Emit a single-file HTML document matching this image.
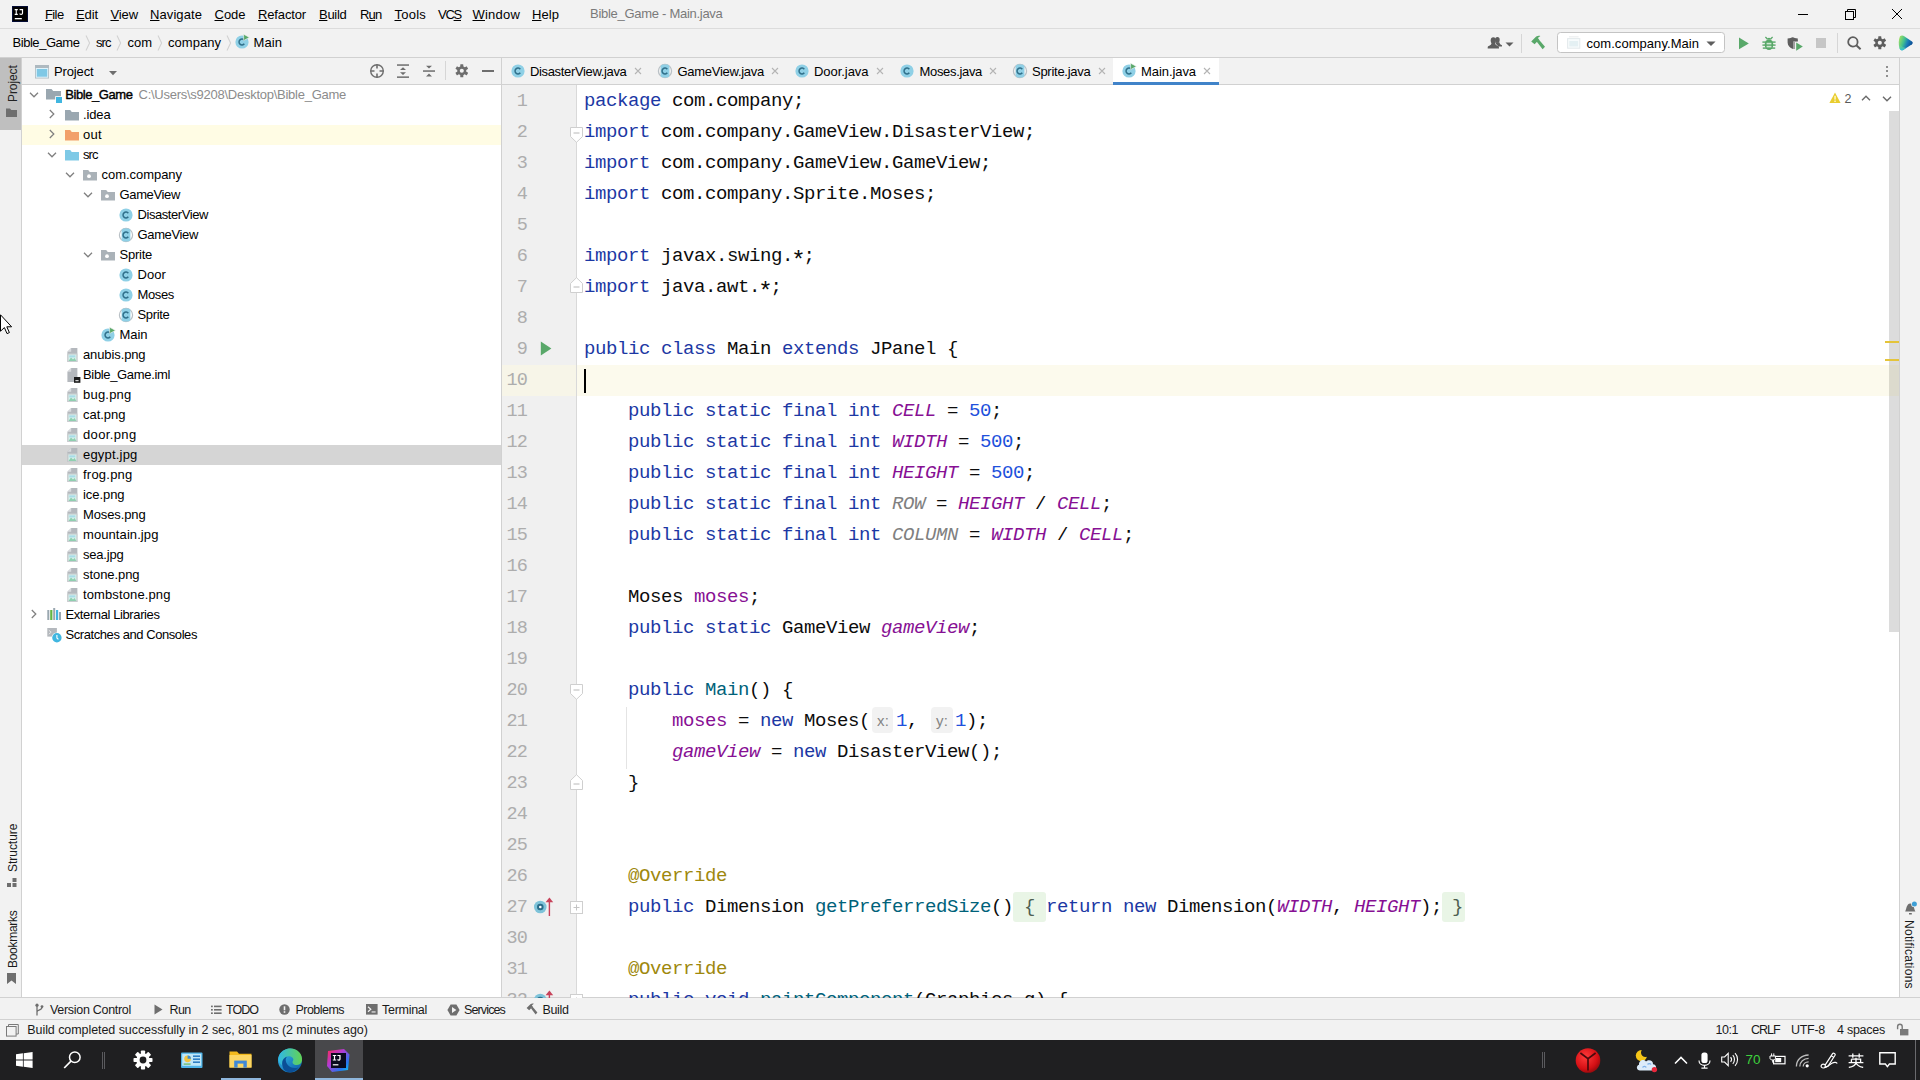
<!DOCTYPE html>
<html><head><meta charset="utf-8"><title>Bible_Game - Main.java</title>
<style>
html,body{margin:0;padding:0;}
body{width:1920px;height:1080px;overflow:hidden;position:relative;background:#f2f2f2;font-family:"Liberation Sans",sans-serif;}
.t{position:absolute;white-space:pre;}
u{text-decoration:underline;text-underline-offset:1px;}
</style></head><body>
<div style="position:absolute;left:0px;top:28px;width:1920px;height:1px;background:#dcdcdc;"></div>
<div style="position:absolute;left:0px;top:57px;width:1920px;height:1px;background:#d1d1d1;"></div>
<div style="position:absolute;left:0px;top:58px;width:21px;height:939px;background:#f2f2f2;"></div>
<div style="position:absolute;left:21px;top:58px;width:1px;height:939px;background:#d1d1d1;"></div>
<div style="position:absolute;left:0px;top:58px;width:21px;height:72px;background:#bfbfbf;"></div>
<div style="position:absolute;left:22px;top:85px;width:479px;height:912px;background:#ffffff;"></div>
<div style="position:absolute;left:22px;top:84px;width:479px;height:1px;background:#d1d1d1;"></div>
<div style="position:absolute;left:501px;top:58px;width:1px;height:939px;background:#d1d1d1;"></div>
<div style="position:absolute;left:502px;top:58px;width:1px;height:939px;background:#f2f2f2;"></div>
<div style="position:absolute;left:502px;top:84px;width:1397px;height:1px;background:#d1d1d1;"></div>
<div style="position:absolute;left:1113px;top:58px;width:106px;height:26px;background:#ffffff;"></div>
<div style="position:absolute;left:1113px;top:82px;width:106px;height:3px;background:#4083c9;"></div>
<div style="position:absolute;left:502px;top:85px;width:1397px;height:912px;background:#ffffff;"></div>
<div style="position:absolute;left:502px;top:85px;width:74px;height:912px;background:#f0f0f0;"></div>
<div style="position:absolute;left:576px;top:85px;width:1px;height:912px;background:#d9d9d9;"></div>
<div style="position:absolute;left:502px;top:365px;width:74px;height:31px;background:#f7f5e8;"></div>
<div style="position:absolute;left:577px;top:365px;width:1312px;height:31px;background:#fcfaed;"></div>
<div style="position:absolute;left:584px;top:369px;width:2px;height:24px;background:#000;"></div>
<div style="position:absolute;left:1889px;top:111px;width:10px;height:521px;background:#dcdcdc;"></div>
<div style="position:absolute;left:1889px;top:365px;width:10px;height:31px;background:#dcdacd;"></div>
<div style="position:absolute;left:1885px;top:341px;width:14px;height:2px;background:#e4c43a;"></div>
<div style="position:absolute;left:1885px;top:359px;width:14px;height:2px;background:#e4c43a;"></div>
<div style="position:absolute;left:1899px;top:58px;width:1px;height:939px;background:#d1d1d1;"></div>
<div style="position:absolute;left:1900px;top:58px;width:20px;height:939px;background:#f2f2f2;"></div>
<div style="position:absolute;left:0px;top:997px;width:1920px;height:1px;background:#d1d1d1;"></div>
<div style="position:absolute;left:0px;top:1019px;width:1920px;height:1px;background:#d1d1d1;"></div>
<div style="position:absolute;left:0px;top:1040px;width:1920px;height:40px;background:#1f1f21;"></div>
<div style="position:absolute;left:315px;top:1040px;width:48px;height:40px;background:#48484b;"></div>
<div style="position:absolute;left:315px;top:1078px;width:48px;height:2px;background:#8fb6dc;"></div>
<div style="position:absolute;left:221px;top:1078px;width:40px;height:2px;background:#8fb6dc;"></div>
<div style="position:absolute;left:102px;top:1052px;width:1px;height:17px;background:#5a5a5e;"></div>
<div style="position:absolute;left:104px;top:1052px;width:1px;height:17px;background:#5a5a5e;"></div>
<div style="position:absolute;left:1542px;top:1052px;width:1px;height:16px;background:#5a5a5e;"></div>
<div style="position:absolute;left:1544px;top:1052px;width:1px;height:16px;background:#5a5a5e;"></div>
<div style="position:absolute;left:1915px;top:1040px;width:1px;height:40px;background:#6a6a6e;"></div>
<div style="position:absolute;left:22px;top:125px;width:479px;height:20px;background:#fffce4;"></div>
<div style="position:absolute;left:22px;top:445px;width:479px;height:20px;background:#d5d5d5;"></div>
<svg style="position:absolute;left:84px;top:34px;" width="8" height="18" viewBox="0 0 8 18"><path d="M2 1.5 L5.6 9 L2 16.5" fill="none" stroke="#d2d2d2" stroke-width="1.1"/></svg>
<svg style="position:absolute;left:115px;top:34px;" width="8" height="18" viewBox="0 0 8 18"><path d="M2 1.5 L5.6 9 L2 16.5" fill="none" stroke="#d2d2d2" stroke-width="1.1"/></svg>
<svg style="position:absolute;left:156px;top:34px;" width="8" height="18" viewBox="0 0 8 18"><path d="M2 1.5 L5.6 9 L2 16.5" fill="none" stroke="#d2d2d2" stroke-width="1.1"/></svg>
<svg style="position:absolute;left:225px;top:34px;" width="8" height="18" viewBox="0 0 8 18"><path d="M2 1.5 L5.6 9 L2 16.5" fill="none" stroke="#d2d2d2" stroke-width="1.1"/></svg>
<svg style="position:absolute;left:634px;top:67px;" width="8" height="8" viewBox="0 0 8 8"><path d="M1 1 L7 7 M7 1 L1 7" stroke="#b4b4b4" stroke-width="1.1" fill="none"/></svg>
<svg style="position:absolute;left:771px;top:67px;" width="8" height="8" viewBox="0 0 8 8"><path d="M1 1 L7 7 M7 1 L1 7" stroke="#b4b4b4" stroke-width="1.1" fill="none"/></svg>
<svg style="position:absolute;left:876px;top:67px;" width="8" height="8" viewBox="0 0 8 8"><path d="M1 1 L7 7 M7 1 L1 7" stroke="#b4b4b4" stroke-width="1.1" fill="none"/></svg>
<svg style="position:absolute;left:989px;top:67px;" width="8" height="8" viewBox="0 0 8 8"><path d="M1 1 L7 7 M7 1 L1 7" stroke="#b4b4b4" stroke-width="1.1" fill="none"/></svg>
<svg style="position:absolute;left:1098px;top:67px;" width="8" height="8" viewBox="0 0 8 8"><path d="M1 1 L7 7 M7 1 L1 7" stroke="#b4b4b4" stroke-width="1.1" fill="none"/></svg>
<svg style="position:absolute;left:1203px;top:67px;" width="8" height="8" viewBox="0 0 8 8"><path d="M1 1 L7 7 M7 1 L1 7" stroke="#b4b4b4" stroke-width="1.1" fill="none"/></svg>
<div style="position:absolute;left:872px;top:706.7px;width:21px;height:26px;background:#f2f2f2;border-radius:4px"></div>
<div style="position:absolute;left:931px;top:706.7px;width:22px;height:26px;background:#f2f2f2;border-radius:4px"></div>
<div style="position:absolute;left:1013px;top:891.7px;width:33px;height:30px;background:#e9f5e6;border-radius:3px"></div>
<div style="position:absolute;left:1442px;top:891.7px;width:23px;height:30px;background:#e9f5e6;border-radius:3px"></div>
<div style="position:absolute;left:626px;top:707px;width:1px;height:62px;background:#e4e4e4;"></div>
<svg style="position:absolute;left:12px;top:6px;" width="16" height="16" viewBox="0 0 16 16"><rect width="16" height="16" fill="#061042"/><rect x="0.8" y="0.8" width="14.4" height="14.4" fill="#000"/><rect x="2.8" y="12" width="7" height="1.3" fill="#fff"/><path d="M2.7 3.1h3.1v1.1h-1v3.6h1v1.1H2.7V7.8h1V4.2h-1z M7.6 3.1h3.5v3.9c0 1.3-.8 1.9-1.9 1.9-.9 0-1.5-.3-2-.9l.8-.8c.3.4.6.6 1.100.6.5 0 .8-.3.8-.9V4.200H7.6z" fill="#fff"/></svg>
<div style="position:absolute;left:1798px;top:14px;width:10px;height:1px;background:#000;"></div>
<svg style="position:absolute;left:1844px;top:8px;" width="12" height="12" viewBox="0 0 12 12"><path d="M3.5 3.5V1.5H11.5V9.5H9.5" fill="none" stroke="#000" stroke-width="1"/><rect x="1.5" y="3.5" width="8" height="8" fill="none" stroke="#000" stroke-width="1"/></svg>
<svg style="position:absolute;left:1891px;top:8px;" width="12" height="12" viewBox="0 0 12 12"><path d="M1 1L11 11M11 1L1 11" stroke="#000" stroke-width="1" fill="none"/></svg>
<svg style="position:absolute;left:234px;top:34.3px;" width="16" height="16" viewBox="0 0 16 16"><circle cx="8" cy="8" r="6.6" fill="#8fd0e6"/><path d="M10.3 9.7a2.9 2.9 0 1 1 0-3.4" fill="none" stroke="#2f6f8a" stroke-width="1.5"/><path d="M9.6 0.2 L15.4 3.4 L9.6 6.6 Z" fill="#59a869" stroke="#f4f4f4" stroke-width="0.6"/></svg>
<svg style="position:absolute;left:510px;top:63.3px;" width="16" height="16" viewBox="0 0 16 16"><circle cx="8" cy="8" r="6.6" fill="#8fd0e6"/><path d="M10.3 9.7a2.9 2.9 0 1 1 0-3.4" fill="none" stroke="#2f6f8a" stroke-width="1.5"/></svg>
<svg style="position:absolute;left:657px;top:63.3px;" width="16" height="16" viewBox="0 0 16 16"><circle cx="8" cy="8" r="6.6" fill="none" stroke="#b9c0c5" stroke-width="1.2"/><rect x="3.6" y="1.6" width="8.8" height="12.8" rx="2.5" fill="#8fd0e6"/><path d="M10.3 9.7a2.9 2.9 0 1 1 0-3.4" fill="none" stroke="#2f6f8a" stroke-width="1.5"/></svg>
<svg style="position:absolute;left:794px;top:63.3px;" width="16" height="16" viewBox="0 0 16 16"><circle cx="8" cy="8" r="6.6" fill="#8fd0e6"/><path d="M10.3 9.7a2.9 2.9 0 1 1 0-3.4" fill="none" stroke="#2f6f8a" stroke-width="1.5"/></svg>
<svg style="position:absolute;left:899px;top:63.3px;" width="16" height="16" viewBox="0 0 16 16"><circle cx="8" cy="8" r="6.6" fill="#8fd0e6"/><path d="M10.3 9.7a2.9 2.9 0 1 1 0-3.4" fill="none" stroke="#2f6f8a" stroke-width="1.5"/></svg>
<svg style="position:absolute;left:1012px;top:63.3px;" width="16" height="16" viewBox="0 0 16 16"><circle cx="8" cy="8" r="6.6" fill="none" stroke="#b9c0c5" stroke-width="1.2"/><rect x="3.6" y="1.6" width="8.8" height="12.8" rx="2.5" fill="#8fd0e6"/><path d="M10.3 9.7a2.9 2.9 0 1 1 0-3.4" fill="none" stroke="#2f6f8a" stroke-width="1.5"/></svg>
<svg style="position:absolute;left:1121px;top:63.3px;" width="16" height="16" viewBox="0 0 16 16"><circle cx="8" cy="8" r="6.6" fill="#8fd0e6"/><path d="M10.3 9.7a2.9 2.9 0 1 1 0-3.4" fill="none" stroke="#2f6f8a" stroke-width="1.5"/><path d="M9.6 0.2 L15.4 3.4 L9.6 6.6 Z" fill="#59a869" stroke="#f4f4f4" stroke-width="0.6"/></svg>
<svg style="position:absolute;left:118px;top:206.5px;" width="16" height="16" viewBox="0 0 16 16"><circle cx="8" cy="8" r="6.6" fill="#8fd0e6"/><path d="M10.3 9.7a2.9 2.9 0 1 1 0-3.4" fill="none" stroke="#2f6f8a" stroke-width="1.5"/></svg>
<svg style="position:absolute;left:118px;top:226.5px;" width="16" height="16" viewBox="0 0 16 16"><circle cx="8" cy="8" r="6.6" fill="none" stroke="#b9c0c5" stroke-width="1.2"/><rect x="3.6" y="1.6" width="8.8" height="12.8" rx="2.5" fill="#8fd0e6"/><path d="M10.3 9.7a2.9 2.9 0 1 1 0-3.4" fill="none" stroke="#2f6f8a" stroke-width="1.5"/></svg>
<svg style="position:absolute;left:118px;top:266.5px;" width="16" height="16" viewBox="0 0 16 16"><circle cx="8" cy="8" r="6.6" fill="#8fd0e6"/><path d="M10.3 9.7a2.9 2.9 0 1 1 0-3.4" fill="none" stroke="#2f6f8a" stroke-width="1.5"/></svg>
<svg style="position:absolute;left:118px;top:286.5px;" width="16" height="16" viewBox="0 0 16 16"><circle cx="8" cy="8" r="6.6" fill="#8fd0e6"/><path d="M10.3 9.7a2.9 2.9 0 1 1 0-3.4" fill="none" stroke="#2f6f8a" stroke-width="1.5"/></svg>
<svg style="position:absolute;left:118px;top:306.5px;" width="16" height="16" viewBox="0 0 16 16"><circle cx="8" cy="8" r="6.6" fill="none" stroke="#b9c0c5" stroke-width="1.2"/><rect x="3.6" y="1.6" width="8.8" height="12.8" rx="2.5" fill="#8fd0e6"/><path d="M10.3 9.7a2.9 2.9 0 1 1 0-3.4" fill="none" stroke="#2f6f8a" stroke-width="1.5"/></svg>
<svg style="position:absolute;left:100px;top:326.5px;" width="16" height="16" viewBox="0 0 16 16"><circle cx="8" cy="8" r="6.6" fill="#8fd0e6"/><path d="M10.3 9.7a2.9 2.9 0 1 1 0-3.4" fill="none" stroke="#2f6f8a" stroke-width="1.5"/><path d="M9.6 0.2 L15.4 3.4 L9.6 6.6 Z" fill="#59a869" stroke="#f4f4f4" stroke-width="0.6"/></svg>
<svg style="position:absolute;left:27.700000000000003px;top:90.5px;" width="12" height="8" viewBox="0 0 12 8"><path d="M2 1.8 L6 5.8 L10 1.8" fill="none" stroke="#7f7f7f" stroke-width="1.25"/></svg>
<svg style="position:absolute;left:47.7px;top:108.2px;" width="8" height="12" viewBox="0 0 8 12"><path d="M1.8 2 L5.8 6 L1.8 10" fill="none" stroke="#7f7f7f" stroke-width="1.25"/></svg>
<svg style="position:absolute;left:47.7px;top:128.2px;" width="8" height="12" viewBox="0 0 8 12"><path d="M1.8 2 L5.8 6 L1.8 10" fill="none" stroke="#7f7f7f" stroke-width="1.25"/></svg>
<svg style="position:absolute;left:45.7px;top:150.5px;" width="12" height="8" viewBox="0 0 12 8"><path d="M2 1.8 L6 5.8 L10 1.8" fill="none" stroke="#7f7f7f" stroke-width="1.25"/></svg>
<svg style="position:absolute;left:63.7px;top:170.5px;" width="12" height="8" viewBox="0 0 12 8"><path d="M2 1.8 L6 5.8 L10 1.8" fill="none" stroke="#7f7f7f" stroke-width="1.25"/></svg>
<svg style="position:absolute;left:81.7px;top:190.5px;" width="12" height="8" viewBox="0 0 12 8"><path d="M2 1.8 L6 5.8 L10 1.8" fill="none" stroke="#7f7f7f" stroke-width="1.25"/></svg>
<svg style="position:absolute;left:81.7px;top:250.5px;" width="12" height="8" viewBox="0 0 12 8"><path d="M2 1.8 L6 5.8 L10 1.8" fill="none" stroke="#7f7f7f" stroke-width="1.25"/></svg>
<svg style="position:absolute;left:29.5px;top:608.3px;" width="8" height="12" viewBox="0 0 8 12"><path d="M1.8 2 L5.8 6 L1.8 10" fill="none" stroke="#7f7f7f" stroke-width="1.25"/></svg>
<svg style="position:absolute;left:46px;top:88px;" width="17" height="16" viewBox="0 0 17 16"><path d="M0 1 H5.5 L7.2 3 H15 V11.5 H0 Z" fill="#9aa7b0"/><rect x="9.2" y="8.2" width="7" height="7" fill="#fff"/><rect x="10" y="9" width="6" height="6" fill="#40b6e0"/></svg>
<svg style="position:absolute;left:65px;top:108.5px;" width="14" height="12" viewBox="0 0 14 12"><path d="M0 1 H5.2 L6.8 3 H14 V11.5 H0 Z" fill="#9aa7b0"/></svg>
<svg style="position:absolute;left:65px;top:128.5px;" width="14" height="12" viewBox="0 0 14 12"><path d="M0 1 H5.2 L6.8 3 H14 V11.5 H0 Z" fill="#f2a06a"/></svg>
<svg style="position:absolute;left:65px;top:148.5px;" width="14" height="12" viewBox="0 0 14 12"><path d="M0 1 H5.2 L6.8 3 H14 V11.5 H0 Z" fill="#7ec9e6"/></svg>
<svg style="position:absolute;left:83px;top:168.5px;" width="14" height="12" viewBox="0 0 14 12"><path d="M0 1 H5.2 L6.8 3 H14 V11.5 H0 Z" fill="#aab2b8"/><circle cx="6" cy="7.2" r="1.9" fill="#fff"/></svg>
<svg style="position:absolute;left:101px;top:188.5px;" width="14" height="12" viewBox="0 0 14 12"><path d="M0 1 H5.2 L6.8 3 H14 V11.5 H0 Z" fill="#aab2b8"/><circle cx="6" cy="7.2" r="1.9" fill="#fff"/></svg>
<svg style="position:absolute;left:101px;top:248.5px;" width="14" height="12" viewBox="0 0 14 12"><path d="M0 1 H5.2 L6.8 3 H14 V11.5 H0 Z" fill="#aab2b8"/><circle cx="6" cy="7.2" r="1.9" fill="#fff"/></svg>
<svg style="position:absolute;left:67px;top:347.5px;" width="12" height="14" viewBox="0 0 12 14"><path d="M4.2 0 H10.4 V14 H0.4 V3.8 Z" fill="#b4b8bd"/><path d="M0.4 3.8 L4.2 0 V3.8Z" fill="#d9dbde"/><rect x="0.4" y="5.5" width="10" height="8.5" fill="#c9cdd0"/><rect x="1.5" y="6.6" width="7.8" height="6.3" fill="#d5f0ea"/><path d="M1.5 12.9 L4 9.6 L6 11.4 L7.6 10 L9.3 12.9Z" fill="#8fcfb0"/><rect x="2.3" y="7.4" width="6" height="2" fill="#a8dbe8"/></svg>
<svg style="position:absolute;left:67px;top:387.5px;" width="12" height="14" viewBox="0 0 12 14"><path d="M4.2 0 H10.4 V14 H0.4 V3.8 Z" fill="#b4b8bd"/><path d="M0.4 3.8 L4.2 0 V3.8Z" fill="#d9dbde"/><rect x="0.4" y="5.5" width="10" height="8.5" fill="#c9cdd0"/><rect x="1.5" y="6.6" width="7.8" height="6.3" fill="#d5f0ea"/><path d="M1.5 12.9 L4 9.6 L6 11.4 L7.6 10 L9.3 12.9Z" fill="#8fcfb0"/><rect x="2.3" y="7.4" width="6" height="2" fill="#a8dbe8"/></svg>
<svg style="position:absolute;left:67px;top:407.5px;" width="12" height="14" viewBox="0 0 12 14"><path d="M4.2 0 H10.4 V14 H0.4 V3.8 Z" fill="#b4b8bd"/><path d="M0.4 3.8 L4.2 0 V3.8Z" fill="#d9dbde"/><rect x="0.4" y="5.5" width="10" height="8.5" fill="#c9cdd0"/><rect x="1.5" y="6.6" width="7.8" height="6.3" fill="#d5f0ea"/><path d="M1.5 12.9 L4 9.6 L6 11.4 L7.6 10 L9.3 12.9Z" fill="#8fcfb0"/><rect x="2.3" y="7.4" width="6" height="2" fill="#a8dbe8"/></svg>
<svg style="position:absolute;left:67px;top:427.5px;" width="12" height="14" viewBox="0 0 12 14"><path d="M4.2 0 H10.4 V14 H0.4 V3.8 Z" fill="#b4b8bd"/><path d="M0.4 3.8 L4.2 0 V3.8Z" fill="#d9dbde"/><rect x="0.4" y="5.5" width="10" height="8.5" fill="#c9cdd0"/><rect x="1.5" y="6.6" width="7.8" height="6.3" fill="#d5f0ea"/><path d="M1.5 12.9 L4 9.6 L6 11.4 L7.6 10 L9.3 12.9Z" fill="#8fcfb0"/><rect x="2.3" y="7.4" width="6" height="2" fill="#a8dbe8"/></svg>
<svg style="position:absolute;left:67px;top:447.5px;" width="12" height="14" viewBox="0 0 12 14"><path d="M4.2 0 H10.4 V14 H0.4 V3.8 Z" fill="#b4b8bd"/><path d="M0.4 3.8 L4.2 0 V3.8Z" fill="#d9dbde"/><rect x="0.4" y="5.5" width="10" height="8.5" fill="#c9cdd0"/><rect x="1.5" y="6.6" width="7.8" height="6.3" fill="#d5f0ea"/><path d="M1.5 12.9 L4 9.6 L6 11.4 L7.6 10 L9.3 12.9Z" fill="#8fcfb0"/><rect x="2.3" y="7.4" width="6" height="2" fill="#a8dbe8"/></svg>
<svg style="position:absolute;left:67px;top:467.5px;" width="12" height="14" viewBox="0 0 12 14"><path d="M4.2 0 H10.4 V14 H0.4 V3.8 Z" fill="#b4b8bd"/><path d="M0.4 3.8 L4.2 0 V3.8Z" fill="#d9dbde"/><rect x="0.4" y="5.5" width="10" height="8.5" fill="#c9cdd0"/><rect x="1.5" y="6.6" width="7.8" height="6.3" fill="#d5f0ea"/><path d="M1.5 12.9 L4 9.6 L6 11.4 L7.6 10 L9.3 12.9Z" fill="#8fcfb0"/><rect x="2.3" y="7.4" width="6" height="2" fill="#a8dbe8"/></svg>
<svg style="position:absolute;left:67px;top:487.5px;" width="12" height="14" viewBox="0 0 12 14"><path d="M4.2 0 H10.4 V14 H0.4 V3.8 Z" fill="#b4b8bd"/><path d="M0.4 3.8 L4.2 0 V3.8Z" fill="#d9dbde"/><rect x="0.4" y="5.5" width="10" height="8.5" fill="#c9cdd0"/><rect x="1.5" y="6.6" width="7.8" height="6.3" fill="#d5f0ea"/><path d="M1.5 12.9 L4 9.6 L6 11.4 L7.6 10 L9.3 12.9Z" fill="#8fcfb0"/><rect x="2.3" y="7.4" width="6" height="2" fill="#a8dbe8"/></svg>
<svg style="position:absolute;left:67px;top:507.5px;" width="12" height="14" viewBox="0 0 12 14"><path d="M4.2 0 H10.4 V14 H0.4 V3.8 Z" fill="#b4b8bd"/><path d="M0.4 3.8 L4.2 0 V3.8Z" fill="#d9dbde"/><rect x="0.4" y="5.5" width="10" height="8.5" fill="#c9cdd0"/><rect x="1.5" y="6.6" width="7.8" height="6.3" fill="#d5f0ea"/><path d="M1.5 12.9 L4 9.6 L6 11.4 L7.6 10 L9.3 12.9Z" fill="#8fcfb0"/><rect x="2.3" y="7.4" width="6" height="2" fill="#a8dbe8"/></svg>
<svg style="position:absolute;left:67px;top:527.5px;" width="12" height="14" viewBox="0 0 12 14"><path d="M4.2 0 H10.4 V14 H0.4 V3.8 Z" fill="#b4b8bd"/><path d="M0.4 3.8 L4.2 0 V3.8Z" fill="#d9dbde"/><rect x="0.4" y="5.5" width="10" height="8.5" fill="#c9cdd0"/><rect x="1.5" y="6.6" width="7.8" height="6.3" fill="#d5f0ea"/><path d="M1.5 12.9 L4 9.6 L6 11.4 L7.6 10 L9.3 12.9Z" fill="#8fcfb0"/><rect x="2.3" y="7.4" width="6" height="2" fill="#a8dbe8"/></svg>
<svg style="position:absolute;left:67px;top:547.5px;" width="12" height="14" viewBox="0 0 12 14"><path d="M4.2 0 H10.4 V14 H0.4 V3.8 Z" fill="#b4b8bd"/><path d="M0.4 3.8 L4.2 0 V3.8Z" fill="#d9dbde"/><rect x="0.4" y="5.5" width="10" height="8.5" fill="#c9cdd0"/><rect x="1.5" y="6.6" width="7.8" height="6.3" fill="#d5f0ea"/><path d="M1.5 12.9 L4 9.6 L6 11.4 L7.6 10 L9.3 12.9Z" fill="#8fcfb0"/><rect x="2.3" y="7.4" width="6" height="2" fill="#a8dbe8"/></svg>
<svg style="position:absolute;left:67px;top:567.5px;" width="12" height="14" viewBox="0 0 12 14"><path d="M4.2 0 H10.4 V14 H0.4 V3.8 Z" fill="#b4b8bd"/><path d="M0.4 3.8 L4.2 0 V3.8Z" fill="#d9dbde"/><rect x="0.4" y="5.5" width="10" height="8.5" fill="#c9cdd0"/><rect x="1.5" y="6.6" width="7.8" height="6.3" fill="#d5f0ea"/><path d="M1.5 12.9 L4 9.6 L6 11.4 L7.6 10 L9.3 12.9Z" fill="#8fcfb0"/><rect x="2.3" y="7.4" width="6" height="2" fill="#a8dbe8"/></svg>
<svg style="position:absolute;left:67px;top:587.5px;" width="12" height="14" viewBox="0 0 12 14"><path d="M4.2 0 H10.4 V14 H0.4 V3.8 Z" fill="#b4b8bd"/><path d="M0.4 3.8 L4.2 0 V3.8Z" fill="#d9dbde"/><rect x="0.4" y="5.5" width="10" height="8.5" fill="#c9cdd0"/><rect x="1.5" y="6.6" width="7.8" height="6.3" fill="#d5f0ea"/><path d="M1.5 12.9 L4 9.6 L6 11.4 L7.6 10 L9.3 12.9Z" fill="#8fcfb0"/><rect x="2.3" y="7.4" width="6" height="2" fill="#a8dbe8"/></svg>
<svg style="position:absolute;left:67px;top:367.5px;" width="14" height="15" viewBox="0 0 14 15"><path d="M4.2 0 H10.4 V14 H0.4 V3.8 Z" fill="#b4b8bd"/><path d="M0.4 3.8 L4.2 0 V3.8Z" fill="#d9dbde"/><rect x="7" y="9" width="6.4" height="5.8" fill="#1c1c1c"/><rect x="8.4" y="12.2" width="3.2" height="1" fill="#fff"/></svg>
<svg style="position:absolute;left:47px;top:608px;" width="15" height="12" viewBox="0 0 15 12"><rect x="0.3" y="2" width="2" height="10" fill="#9aa7b0"/><rect x="3.2" y="2" width="2.2" height="10" fill="#62b543"/><rect x="6.2" y="0" width="2" height="12" fill="#9aa7b0"/><rect x="9" y="2" width="2.2" height="10" fill="#40b6e0"/><rect x="12" y="4" width="2" height="8" fill="#9aa7b0"/></svg>
<svg style="position:absolute;left:47px;top:627px;" width="16" height="17" viewBox="0 0 16 17"><rect x="0.3" y="1" width="9.6" height="8.6" fill="#b4b8bd"/><path d="M1.8 3.2 L4.2 5.2 L1.8 7.2" fill="none" stroke="#e6e6e6" stroke-width="1"/><circle cx="9.9" cy="10.8" r="5.3" fill="#fff"/><circle cx="9.9" cy="10.8" r="4.7" fill="#40b6e0"/><path d="M9.9 8 V11 L11.4 12.4" fill="none" stroke="#fff" stroke-width="1.1"/></svg>
<svg style="position:absolute;left:35px;top:64.5px;" width="14" height="14" viewBox="0 0 14 14"><rect x="0" y="0" width="14" height="13.5" fill="#aeb9c0"/><rect x="0.8" y="3" width="12.4" height="9.7" fill="#dff2fa"/><rect x="1.8" y="4" width="10.4" height="7.7" fill="#7fc8e5"/></svg>
<svg style="position:absolute;left:108px;top:69.5px;" width="10" height="6" viewBox="0 0 10 6"><path d="M1 1 H9 L5 5.2Z" fill="#6e6e6e"/></svg>
<svg style="position:absolute;left:369px;top:63px;" width="16" height="16" viewBox="0 0 16 16"><circle cx="8" cy="8" r="6.3" fill="none" stroke="#6e6e6e" stroke-width="1.4"/><path d="M8 1.5V5.5M8 10.5V14.5M1.5 8H5.5M10.5 8H14.5" stroke="#6e6e6e" stroke-width="1.6"/></svg>
<svg style="position:absolute;left:396px;top:63px;" width="14" height="16" viewBox="0 0 14 16"><rect x="1" y="1.3" width="12" height="1.5" fill="#6e6e6e"/><rect x="1" y="13.4" width="12" height="1.5" fill="#6e6e6e"/><path d="M7 4.2 L10 7 H4Z M7 12 L10 9.2 H4Z" fill="#6e6e6e"/></svg>
<svg style="position:absolute;left:422px;top:63px;" width="14" height="16" viewBox="0 0 14 16"><rect x="1" y="7.3" width="12" height="1.5" fill="#6e6e6e"/><path d="M7 5.6 L10 2.8 H4Z M7 10.6 L10 13.4 H4Z" fill="#6e6e6e"/></svg>
<div style="position:absolute;left:445px;top:61px;width:1px;height:19px;background:#d6d6d6;"></div>
<svg style="position:absolute;left:455.2px;top:64.4px;" width="13.6" height="13.6" viewBox="0 0 16 16"><g fill="#6e6e6e"><circle cx="8" cy="8" r="5.3"/><rect x="6.2" y="0.3" width="3.6" height="4.2" rx="0.6" transform="rotate(0 8 8)"/><rect x="6.2" y="0.3" width="3.6" height="4.2" rx="0.6" transform="rotate(60 8 8)"/><rect x="6.2" y="0.3" width="3.6" height="4.2" rx="0.6" transform="rotate(120 8 8)"/><rect x="6.2" y="0.3" width="3.6" height="4.2" rx="0.6" transform="rotate(180 8 8)"/><rect x="6.2" y="0.3" width="3.6" height="4.2" rx="0.6" transform="rotate(240 8 8)"/><rect x="6.2" y="0.3" width="3.6" height="4.2" rx="0.6" transform="rotate(300 8 8)"/></g><circle cx="8" cy="8" r="2.4" fill="#f2f2f2"/></svg>
<div style="position:absolute;left:482px;top:70px;width:12px;height:2px;background:#6e6e6e;"></div>
<div style="position:absolute;left:1886px;top:65.5px;width:2.4px;height:2.4px;border-radius:2px;background:#6e6e6e"></div>
<div style="position:absolute;left:1886px;top:70px;width:2.4px;height:2.4px;border-radius:2px;background:#6e6e6e"></div>
<div style="position:absolute;left:1886px;top:74.5px;width:2.4px;height:2.4px;border-radius:2px;background:#6e6e6e"></div>
<span class="t" style="left:5px;top:102px;font-size:12px;line-height:16px;transform-origin:0 0;transform:rotate(-90deg);letter-spacing:-0.09px;color:#222">Project</span>
<svg style="position:absolute;left:6px;top:108px;" width="11" height="9" viewBox="0 0 11 9"><path d="M0 0.5 H4 L5.3 2 H11 V9 H0Z" fill="#6e6e6e"/></svg>
<span class="t" style="left:4.8px;top:872.3px;font-size:12px;line-height:16px;transform-origin:0 0;transform:rotate(-90deg);letter-spacing:-0.03px;color:#1a1a1a">Structure</span>
<svg style="position:absolute;left:7px;top:878px;" width="10" height="9" viewBox="0 0 10 9"><rect x="0" y="5" width="4" height="4" fill="#6e6e6e"/><rect x="5.5" y="5" width="4" height="4" fill="#6e6e6e"/><rect x="5.5" y="0" width="4" height="4" fill="#6e6e6e"/></svg>
<span class="t" style="left:4.8px;top:967.5px;font-size:12px;line-height:16px;transform-origin:0 0;transform:rotate(-90deg);letter-spacing:-0.29px;color:#1a1a1a">Bookmarks</span>
<svg style="position:absolute;left:7px;top:973px;" width="9" height="11" viewBox="0 0 9 11"><path d="M0 0 H9 V11 L4.5 7.6 L0 11Z" fill="#6e6e6e"/></svg>
<span class="t" style="left:1916.9px;top:919.8px;font-size:12px;line-height:16px;transform-origin:0 0;transform:rotate(90deg);letter-spacing:0.27px;color:#1a1a1a">Notifications</span>
<svg style="position:absolute;left:1904px;top:901px;" width="14" height="15" viewBox="0 0 14 15"><path d="M1.2 10.5 C2.5 8.5 2.3 3 6.3 2.6 C10.3 3 10 8.5 11.4 10.5Z" fill="#6e6e6e"/><rect x="5" y="12" width="2.8" height="1.5" fill="#6e6e6e"/><circle cx="10.4" cy="3" r="3.2" fill="#f2f2f2"/><circle cx="10.4" cy="3" r="2.5" fill="#3d9fd6"/></svg>
<svg style="position:absolute;left:1487px;top:36px;" width="16" height="14" viewBox="0 0 16 14"><g fill="#5e5e5e"><ellipse cx="10.4" cy="3.9" rx="2.3" ry="2.8"/><path d="M8.2 6.2 H12.4 C12.6 8 13.6 8.4 15 9.2 L15 10.4 L11.5 10.4 L9 8Z"/><ellipse cx="6.3" cy="4.4" rx="2.6" ry="3.2"/><path d="M4.6 6.6 H8 C8 8.6 9 9.2 11.6 10.2 C12 10.6 12 11.6 12 12.4 H0.7 C0.7 11.4 0.7 10.6 1.2 10.2 C3.6 9.2 4.6 8.6 4.6 6.6Z"/></g></svg>
<svg style="position:absolute;left:1504.5px;top:41.5px;" width="9" height="5" viewBox="0 0 9 5"><path d="M0.5 0.5 H8.5 L4.5 4.6Z" fill="#5e5e5e"/></svg>
<div style="position:absolute;left:1521px;top:34px;width:1px;height:19px;background:#d6d6d6;"></div>
<svg style="position:absolute;left:1529px;top:35px;" width="17" height="16" viewBox="0 0 17 16"><g fill="#59a869"><path d="M2.2 6.6 L7.2 1.6 C8.6 0.6 10.2 0.6 11.4 1 L8.8 3 L10.2 4.6 L5.6 9.2 Z"/><path d="M7.6 6.6 L9.8 4.6 L16 11.8 L13.6 14.2 Z"/></g></svg>
<div style="position:absolute;left:1557px;top:32px;width:166px;height:19px;background:#fff;border:1px solid #c4c4c4;border-radius:3.5px"></div>
<svg style="position:absolute;left:1567px;top:36px;" width="14" height="13" viewBox="0 0 14 13"><rect x="2" y="0.3" width="9.6" height="1.1" fill="#eaedee"/><rect x="0.6" y="2.6" width="12.2" height="9.6" fill="#f7fbfc" stroke="#e3e9ec" stroke-width="1"/><rect x="2.3" y="5" width="8.8" height="5.4" fill="#e4f0f3"/></svg>
<svg style="position:absolute;left:1706px;top:41.3px;" width="10" height="5.4" viewBox="0 0 10 5.4"><path d="M0.4 0.4 H9.6 L5 5Z" fill="#5e5e5e"/></svg>
<svg style="position:absolute;left:1738px;top:36.5px;" width="12" height="13" viewBox="0 0 12 13"><path d="M1 0.6 L10.8 6.4 L1 12.2Z" fill="#59a869"/></svg>
<svg style="position:absolute;left:1762px;top:35.5px;" width="14" height="15" viewBox="0 0 14 15"><g fill="#59a869"><ellipse cx="7" cy="8.6" rx="4.3" ry="5.4"/><path d="M4.6 3.6 A2.5 2.5 0 0 1 9.4 3.6Z"/><path d="M3.4 1 L5.4 3 M10.6 1 L8.6 3" stroke="#59a869" stroke-width="1.2"/><rect x="0.4" y="5.4" width="13.2" height="1.4"/><rect x="0.4" y="8.4" width="13.2" height="1.4"/><rect x="0.8" y="11.4" width="12.4" height="1.4"/></g><rect x="4.6" y="6.8" width="4.8" height="1.6" fill="#cfe8d3"/><rect x="4.6" y="9.8" width="4.8" height="1.6" fill="#cfe8d3"/></svg>
<svg style="position:absolute;left:1787px;top:36.5px;" width="17" height="15" viewBox="0 0 17 15"><path d="M0.6 1.4 C3 1.4 4.6 0.6 5.6 0.2 C6.8 0.6 8.6 1.4 10.8 1.4 L10.8 4 L7.4 4 C6.4 4 6 4.4 6 5.2 L6 12 C3 10.6 0.6 8.6 0.6 5.4Z" fill="#5e5e5e"/><path d="M6 3 L10.8 3 L10.8 5 L8 5 L8 12 L6 12Z" fill="#5e5e5e" opacity="0.55"/><path d="M9.2 5.4 L15.8 9.6 L9.2 13.8Z" fill="#59a869"/></svg>
<div style="position:absolute;left:1816px;top:38px;width:10px;height:10px;background:#c6c6c6;"></div>
<div style="position:absolute;left:1837px;top:33px;width:1px;height:20px;background:#d6d6d6;"></div>
<svg style="position:absolute;left:1846px;top:35px;" width="16" height="16" viewBox="0 0 16 16"><circle cx="6.9" cy="6.9" r="4.7" fill="none" stroke="#5e5e5e" stroke-width="1.8"/><path d="M10.3 10.3 L14.6 14.3" stroke="#5e5e5e" stroke-width="2"/></svg>
<svg style="position:absolute;left:1873.2px;top:36px;" width="13.6" height="13.6" viewBox="0 0 16 16"><g fill="#5e5e5e"><circle cx="8" cy="8" r="5.3"/><rect x="6.2" y="0.3" width="3.6" height="4.2" rx="0.6" transform="rotate(0 8 8)"/><rect x="6.2" y="0.3" width="3.6" height="4.2" rx="0.6" transform="rotate(60 8 8)"/><rect x="6.2" y="0.3" width="3.6" height="4.2" rx="0.6" transform="rotate(120 8 8)"/><rect x="6.2" y="0.3" width="3.6" height="4.2" rx="0.6" transform="rotate(180 8 8)"/><rect x="6.2" y="0.3" width="3.6" height="4.2" rx="0.6" transform="rotate(240 8 8)"/><rect x="6.2" y="0.3" width="3.6" height="4.2" rx="0.6" transform="rotate(300 8 8)"/></g><circle cx="8" cy="8" r="2.4" fill="#f2f2f2"/></svg>
<svg style="position:absolute;left:1897px;top:35px;" width="17" height="16" viewBox="0 0 17 16"><defs><linearGradient id="lg1" x1="0" y1="0" x2="1" y2="0.4"><stop offset="0" stop-color="#b6e85a"/><stop offset="0.45" stop-color="#3fbf8f"/><stop offset="0.7" stop-color="#1a7fb8"/><stop offset="1" stop-color="#0b4f96"/></linearGradient><linearGradient id="lg2" x1="0" y1="0" x2="0" y2="1"><stop offset="0" stop-color="#9ee060" stop-opacity="0"/><stop offset="1" stop-color="#28c3e0"/></linearGradient></defs><path d="M3 1.2 C4.5 0.2 6 0.4 7.6 1.4 L15 6.6 C16 7.4 16 8.4 15 9.2 L6.6 14.8 C5 15.8 3.2 15.4 2.6 13.6 C1.4 9.6 1.4 5 3 1.2Z" fill="url(#lg1)"/><path d="M2.6 13.6 C3.2 15.4 5 15.8 6.6 14.8 L9.4 13 C6.6 12.6 4.4 11 2.2 8.4 C2.1 10.2 2.2 12 2.6 13.6Z" fill="url(#lg2)"/></svg>
<svg style="position:absolute;left:1829px;top:92px;" width="12" height="11.5" viewBox="0 0 12 11.5"><path d="M6 0.4 L11.6 11 H0.4Z" fill="#e9cd2f"/><rect x="5.3" y="3.8" width="1.5" height="3.8" fill="#fff7c0"/><rect x="5.3" y="8.5" width="1.5" height="1.5" fill="#fff7c0"/></svg>
<svg style="position:absolute;left:1861px;top:94.5px;" width="10" height="6" viewBox="0 0 10 6"><path d="M1 5.2 L5 1.2 L9 5.2" fill="none" stroke="#6a6a6a" stroke-width="1.4"/></svg>
<svg style="position:absolute;left:1882px;top:95.5px;" width="10" height="6" viewBox="0 0 10 6"><path d="M1 0.8 L5 4.8 L9 0.8" fill="none" stroke="#6a6a6a" stroke-width="1.4"/></svg>
<svg style="position:absolute;left:540px;top:341px;" width="12" height="15.4" viewBox="0 0 12 15.4"><path d="M0.8 0.6 L11.4 7.6 L0.8 14.6Z" fill="#59a869"/></svg>
<svg style="position:absolute;left:570px;top:126.5px;" width="13" height="16" viewBox="0 0 13 16"><path d="M0.5 0.5 H12.5 V9.5 L6.5 15.3 L0.5 9.5Z" fill="#fff" stroke="#cfcfcf" stroke-width="1"/><path d="M3.5 6 H9.5" stroke="#b8b8b8" stroke-width="1"/></svg>
<svg style="position:absolute;left:570px;top:277px;" width="13" height="16" viewBox="0 0 13 16"><path d="M0.5 15.5 H12.5 V6.5 L6.5 0.7 L0.5 6.5Z" fill="#fff" stroke="#cfcfcf" stroke-width="1"/><path d="M3.5 10 H9.5" stroke="#b8b8b8" stroke-width="1"/></svg>
<svg style="position:absolute;left:570px;top:684px;" width="13" height="16" viewBox="0 0 13 16"><path d="M0.5 0.5 H12.5 V9.5 L6.5 15.3 L0.5 9.5Z" fill="#fff" stroke="#cfcfcf" stroke-width="1"/><path d="M3.5 6 H9.5" stroke="#b8b8b8" stroke-width="1"/></svg>
<svg style="position:absolute;left:570px;top:773.5px;" width="13" height="16" viewBox="0 0 13 16"><path d="M0.5 15.5 H12.5 V6.5 L6.5 0.7 L0.5 6.5Z" fill="#fff" stroke="#cfcfcf" stroke-width="1"/><path d="M3.5 10 H9.5" stroke="#b8b8b8" stroke-width="1"/></svg>
<svg style="position:absolute;left:570px;top:900.8px;" width="13" height="13" viewBox="0 0 13 13"><rect x="0.5" y="0.5" width="12" height="12" fill="#fff" stroke="#cfcfcf" stroke-width="1"/><path d="M3.5 6.5 H9.5 M6.5 3.5 V9.5" stroke="#c4c4c4" stroke-width="1"/></svg>
<svg style="position:absolute;left:570px;top:993.8px;" width="13" height="13" viewBox="0 0 13 13"><rect x="0.5" y="0.5" width="12" height="12" fill="#fff" stroke="#cfcfcf" stroke-width="1"/><path d="M3.5 6.5 H9.5 M6.5 3.5 V9.5" stroke="#c4c4c4" stroke-width="1"/></svg>
<svg style="position:absolute;left:533px;top:896.8px;" width="22" height="20" viewBox="0 0 22 20"><circle cx="7.3" cy="10" r="6.3" fill="#7ec3d9"/><circle cx="7.3" cy="10" r="2.3" fill="#fff" stroke="#2a6d8a" stroke-width="2"/><path d="M16.4 19 V3" stroke="#c7425a" stroke-width="1.4"/><path d="M12.6 5.2 L16.4 0.6 L20.2 5.2Z" fill="#c7425a"/></svg>
<svg style="position:absolute;left:533px;top:989.8px;" width="22" height="20" viewBox="0 0 22 20"><circle cx="7.3" cy="10" r="6.3" fill="#7ec3d9"/><circle cx="7.3" cy="10" r="2.3" fill="#fff" stroke="#2a6d8a" stroke-width="2"/><path d="M16.4 19 V3" stroke="#c7425a" stroke-width="1.4"/><path d="M12.6 5.2 L16.4 0.6 L20.2 5.2Z" fill="#c7425a"/></svg>
<div style="position:absolute;left:0px;top:998px;width:1920px;height:21px;background:#f2f2f2;z-index:5"></div>
<svg style="position:absolute;left:35px;top:1003px;z-index:6;" width="9" height="13" viewBox="0 0 9 13"><circle cx="2" cy="2.2" r="1.6" fill="#6e6e6e"/><circle cx="7" cy="3.6" r="1.4" fill="#6e6e6e"/><path d="M2 2 V12.5 M2 9 C2 6.6 7 7.8 7 4" fill="none" stroke="#6e6e6e" stroke-width="1.3"/></svg>
<svg style="position:absolute;left:154px;top:1004px;z-index:6;" width="9" height="11" viewBox="0 0 9 11"><path d="M0.5 0.5 L8.5 5.5 L0.5 10.5Z" fill="#6e6e6e"/></svg>
<svg style="position:absolute;left:211px;top:1004.5px;z-index:6;" width="11" height="10" viewBox="0 0 11 10"><rect x="0" y="0.6" width="1.8" height="1.6" fill="#6e6e6e"/><rect x="3" y="0.6" width="7.6" height="1.6" fill="#6e6e6e"/><rect x="0" y="4" width="1.8" height="1.6" fill="#6e6e6e"/><rect x="3" y="4" width="7.6" height="1.6" fill="#6e6e6e"/><rect x="0" y="7.4" width="1.8" height="1.6" fill="#6e6e6e"/><rect x="3" y="7.4" width="7.6" height="1.6" fill="#6e6e6e"/></svg>
<svg style="position:absolute;left:279px;top:1003.5px;z-index:6;" width="11" height="11" viewBox="0 0 11 11"><circle cx="5.5" cy="5.5" r="5.2" fill="#6e6e6e"/><rect x="4.7" y="2.3" width="1.6" height="4" fill="#f2f2f2"/><rect x="4.7" y="7.2" width="1.6" height="1.6" fill="#f2f2f2"/></svg>
<svg style="position:absolute;left:366px;top:1004px;z-index:6;" width="12" height="11" viewBox="0 0 12 11"><rect x="0" y="0" width="11.6" height="10.6" fill="#6e6e6e"/><path d="M2 2.8 L4.8 5.3 L2 7.8" fill="none" stroke="#f2f2f2" stroke-width="1.2"/><rect x="5.6" y="7.4" width="4" height="1.1" fill="#f2f2f2"/></svg>
<svg style="position:absolute;left:447px;top:1003.5px;z-index:6;" width="13" height="12" viewBox="0 0 13 12"><path d="M3.6 0.4 H9.4 L12.6 6 L9.4 11.6 H3.6 L0.4 6Z" fill="#6e6e6e"/><path d="M5 3 L9.4 6 L5 9Z" fill="#f2f2f2"/></svg>
<svg style="position:absolute;left:525px;top:1003px;z-index:6;" width="13" height="13" viewBox="0 0 13 13"><g fill="#6e6e6e"><path d="M1.6 5 L5.4 1.2 C6.6 0.4 7.8 0.4 8.8 0.8 L6.8 2.4 L7.8 3.6 L4.2 7.2 Z"/><path d="M5.8 5 L7.4 3.6 L12.4 9.6 L10.6 11.4 Z"/></g></svg>
<svg style="position:absolute;left:6px;top:1023.5px;" width="13" height="13" viewBox="0 0 13 13"><rect x="0.5" y="2.5" width="9.6" height="9.6" fill="none" stroke="#7a7a7a" stroke-width="1"/><path d="M2.5 2.5 V0.5 H12.3 V10 H10.2" fill="none" stroke="#7a7a7a" stroke-width="1"/></svg>
<svg style="position:absolute;left:1896px;top:1023px;" width="13" height="13" viewBox="0 0 13 13"><rect x="4" y="6" width="8.4" height="6.4" fill="#7a7a7a"/><path d="M1.6 6.2 V3.6 A2.3 2.3 0 0 1 6.2 3.6 V6.2" fill="none" stroke="#7a7a7a" stroke-width="1.4"/></svg>
<svg style="position:absolute;left:16px;top:1052px;" width="17" height="16" viewBox="0 0 17 16"><path d="M0 2.3 L6.9 1.3 V7.6 H0Z M7.7 1.2 L16.6 0 V7.6 H7.7Z M0 8.4 H6.9 V14.7 L0 13.7Z M7.7 8.4 H16.6 V16 L7.7 14.8Z" fill="#fff"/></svg>
<svg style="position:absolute;left:63px;top:1050px;" width="18" height="19" viewBox="0 0 18 19"><circle cx="11.8" cy="7.2" r="5.3" fill="none" stroke="#fff" stroke-width="1.5"/><path d="M8 11.2 L1.2 18" stroke="#fff" stroke-width="1.7"/></svg>
<svg style="position:absolute;left:133px;top:1050px;" width="20" height="20" viewBox="0 0 20 20"><g fill="#fff"><circle cx="10" cy="10" r="6.7"/><rect x="7.9" y="0.5" width="4.2" height="5" rx="0.8" transform="rotate(0 10 10)"/><rect x="7.9" y="0.5" width="4.2" height="5" rx="0.8" transform="rotate(45 10 10)"/><rect x="7.9" y="0.5" width="4.2" height="5" rx="0.8" transform="rotate(90 10 10)"/><rect x="7.9" y="0.5" width="4.2" height="5" rx="0.8" transform="rotate(135 10 10)"/><rect x="7.9" y="0.5" width="4.2" height="5" rx="0.8" transform="rotate(180 10 10)"/><rect x="7.9" y="0.5" width="4.2" height="5" rx="0.8" transform="rotate(225 10 10)"/><rect x="7.9" y="0.5" width="4.2" height="5" rx="0.8" transform="rotate(270 10 10)"/><rect x="7.9" y="0.5" width="4.2" height="5" rx="0.8" transform="rotate(315 10 10)"/></g><circle cx="10" cy="10" r="3.4" fill="#1f1f21"/></svg>
<svg style="position:absolute;left:181px;top:1052px;" width="22" height="17" viewBox="0 0 22 17"><rect x="0" y="0.5" width="21.5" height="15.5" rx="1" fill="#4fb4e8"/><rect x="1.2" y="1.8" width="19" height="12" fill="#bfe6f8"/><circle cx="6.6" cy="6.8" r="3.4" fill="#f1c340"/><path d="M6.6 6.8 V3.4 A3.4 3.4 0 0 1 10 6.8Z" fill="#3b8fd6"/><rect x="12" y="3.4" width="7" height="1.6" fill="#2f7fc4"/><rect x="12" y="6.4" width="7" height="1.6" fill="#2f7fc4"/><rect x="12" y="9.4" width="7" height="1.6" fill="#2f7fc4"/><rect x="2.6" y="11.4" width="7" height="1.4" fill="#6fbf73"/></svg>
<svg style="position:absolute;left:229px;top:1050px;" width="23" height="19" viewBox="0 0 23 19"><path d="M0.5 1.6 H8 L10 3.8 H22.5 V17.6 H0.5Z" fill="#f2b91d"/><path d="M0.5 5 H22.5 V17.6 H0.5Z" fill="#fbd665"/><rect x="5.2" y="10.6" width="12.6" height="7" fill="#3f88d8"/><rect x="8.6" y="13.6" width="5.8" height="4" fill="#fbd665"/></svg>
<svg style="position:absolute;left:277px;top:1047.5px;" width="26" height="25" viewBox="0 0 26 25"><defs><linearGradient id="eg1" x1="0" y1="0" x2="1" y2="1"><stop offset="0" stop-color="#35c1f1"/><stop offset="1" stop-color="#0c59a4"/></linearGradient><linearGradient id="eg2" x1="0" y1="0" x2="1" y2="0"><stop offset="0" stop-color="#2fb7e6"/><stop offset="1" stop-color="#63d353"/></linearGradient></defs><circle cx="13" cy="12.5" r="12" fill="url(#eg1)"/><path d="M1.4 10 C3 3 9 0.5 13.5 0.5 C21 0.5 25.6 6.4 25 12.4 C24.6 15.6 21.6 17.4 18.6 17 C15.6 16.6 15 14.4 16 12.8 C17.4 10.6 14.4 7.4 10.4 8.4 C6.4 9.4 4.4 13 5.4 17.4 C2.4 15.4 0.8 12.8 1.4 10Z" fill="url(#eg2)"/><path d="M5.4 17.4 C4.4 13 6.4 9.4 10.4 8.4 C7.8 10 8.4 14.4 10.8 17 C13 19.6 17 21 21.4 19.4 C18.6 23.6 13.6 25.4 9.4 23.6 C7 22.4 5.8 20 5.4 17.4Z" fill="#0b4f96"/></svg>
<svg style="position:absolute;left:327px;top:1048.5px;" width="23" height="23" viewBox="0 0 23 23"><defs><linearGradient id="ij1" x1="0" y1="0" x2="1" y2="1"><stop offset="0" stop-color="#fe2857"/><stop offset="0.4" stop-color="#b13cd6"/><stop offset="0.75" stop-color="#2478f0"/><stop offset="1" stop-color="#0ad1f5"/></linearGradient></defs><path d="M1 2 L17 0 L22.5 5.5 L21 21 L5 23 L0 17Z" fill="url(#ij1)"/><rect x="4" y="4" width="15" height="15" fill="#0a0a1e"/><rect x="5.8" y="15.2" width="5.6" height="1.2" fill="#fff"/><path d="M5.8 6h3.4v1.1H8.1v3.4h1.1v1.1H5.8v-1.1h1.1V7.1H5.8z M10.4 6h3.2v3.9c0 1.2-.7 1.8-1.8 1.8-.8 0-1.3-.3-1.7-.8l.8-.8c.2.3.5.5.8.5.4 0 .6-.2.6-.8V7.1h-1.9z" fill="#fff"/></svg>
<svg style="position:absolute;left:1575px;top:1047.5px;" width="26" height="25" viewBox="0 0 26 25"><defs><radialGradient id="rg1" cx="0.4" cy="0.35" r="0.7"><stop offset="0" stop-color="#ff3b3b"/><stop offset="0.7" stop-color="#d40f14"/><stop offset="1" stop-color="#8e0a0d"/></radialGradient></defs><circle cx="13" cy="12.5" r="12.3" fill="url(#rg1)"/><path d="M5.4 5 L13 10.6 L20.6 5 M13 10.6 V22.6" fill="none" stroke="#4a0a0c" stroke-width="1.7"/></svg>
<svg style="position:absolute;left:1633px;top:1048.5px;" width="26" height="24" viewBox="0 0 26 24"><circle cx="8.4" cy="6.6" r="5.6" fill="#f5c518"/><circle cx="12.6" cy="3.4" r="4.6" fill="#1f1f21"/><path d="M7 21.4 C3.6 21.4 2.6 17 6 15.8 C5.6 11.6 10.6 9.6 13 12.4 C15.6 9.8 20.4 11.4 20 15.2 C24 15.2 24.2 21.4 20.4 21.4Z" fill="#dcebfa"/><path d="M9.6 18.6 C10.2 17 12.6 17 13.2 18.6 M14.6 15.6 C15.2 14.2 17.4 14.2 18 15.6" fill="none" stroke="#7fb2ea" stroke-width="1.3"/><circle cx="21.4" cy="20.6" r="2.7" fill="#e8283c"/></svg>
<svg style="position:absolute;left:1674px;top:1056px;" width="14" height="9" viewBox="0 0 14 9"><path d="M1 7.6 L7 1.4 L13 7.6" fill="none" stroke="#fff" stroke-width="1.5"/></svg>
<svg style="position:absolute;left:1698px;top:1051.5px;" width="13" height="17" viewBox="0 0 13 17"><rect x="3.4" y="0.4" width="6.2" height="10.6" rx="2.6" fill="#fff"/><path d="M1 8.4 C1 15 12 15 12 8.4" fill="none" stroke="#fff" stroke-width="1.2"/><path d="M6.5 13.4 V16 M3.4 16.2 H9.6" stroke="#fff" stroke-width="1.2"/></svg>
<svg style="position:absolute;left:1721px;top:1052px;" width="18" height="15" viewBox="0 0 18 15"><path d="M0.7 5 H3.6 L7.2 1.4 V13.6 L3.6 10 H0.7Z" fill="none" stroke="#fff" stroke-width="1.1"/><path d="M9.6 5.2 C10.8 6.6 10.8 8.4 9.6 9.8 M11.8 3.2 C14 5.6 14 9.4 11.8 11.8 M14 1.2 C17.4 4.6 17.4 10.4 14 13.8" fill="none" stroke="#fff" stroke-width="1.1"/></svg>
<svg style="position:absolute;left:1769px;top:1053px;" width="17" height="13" viewBox="0 0 17 13"><rect x="4.6" y="3.4" width="11.4" height="7.4" fill="none" stroke="#fff" stroke-width="1.2"/><rect x="6.2" y="5" width="6" height="4.2" fill="#fff"/><path d="M2.6 0.4 V3 M4.8 0.4 V3" stroke="#fff" stroke-width="1"/><path d="M1 3 H6.4 V5.4 C6.4 7.4 1 7.4 1 5.4Z" fill="#1f1f21" stroke="#fff" stroke-width="1"/><path d="M3.7 7 V9.6" stroke="#fff" stroke-width="1"/></svg>
<svg style="position:absolute;left:1795px;top:1054px;" width="15" height="14" viewBox="0 0 15 14"><path d="M1.4 12.6 C1.4 6 6.6 1 13.6 1" fill="none" stroke="#bdbdbd" stroke-width="1.3"/><path d="M4.8 12.6 C4.8 8 8.6 4.4 13.6 4.4" fill="none" stroke="#bdbdbd" stroke-width="1.3"/><path d="M8.2 12.6 C8.2 10 10.4 7.8 13.6 7.8" fill="none" stroke="#bdbdbd" stroke-width="1.3"/><circle cx="12.2" cy="11.8" r="1.6" fill="#fff"/></svg>
<svg style="position:absolute;left:1820px;top:1051.5px;" width="18" height="17" viewBox="0 0 18 17"><path d="M5.4 12.6 L12.6 1.6 C13.4 0.4 15.8 1.8 15 3.2 L8 14.2 L5 15.4Z" fill="none" stroke="#fff" stroke-width="1.2"/><path d="M11.2 3.8 L13.8 5.4" stroke="#fff" stroke-width="1.1"/><path d="M5 12.6 C1 11 -0.4 15.4 3 16 C6 16.4 9 13 12.4 11 C14.6 9.8 16.6 10.4 17.2 11.6" fill="none" stroke="#fff" stroke-width="1.2"/></svg>
<svg style="position:absolute;left:1848px;top:1053px;" width="16" height="15" viewBox="0 0 16 15"><g stroke="#fff" stroke-width="1.3" fill="none"><path d="M0.6 2.8 H15.4 M4.8 0.4 V4.8 M11.2 0.4 V4.8"/><path d="M3.4 6.2 H12.6 V9.6 M3.4 6.2 V9.6 M8 4.8 V9.6"/><path d="M0.6 9.6 H15.4"/><path d="M8 9.6 C7.4 12 4.6 13.8 0.8 14.4 M8 9.6 C8.8 12 11.6 13.8 15.2 14.4"/></g></svg>
<svg style="position:absolute;left:1878.5px;top:1052px;" width="17" height="16" viewBox="0 0 17 16"><path d="M0.8 0.8 H16.2 V12 H10.4 L8.4 14.6 L6.4 12 H0.8Z" fill="none" stroke="#fff" stroke-width="1.4"/></svg>
<svg style="position:absolute;left:0px;top:314px;" width="12" height="21" viewBox="0 0 12 21"><path d="M0.5 0.8 V17.2 L4.4 13.6 L7 19.6 L9.4 18.6 L6.8 12.8 H11.6Z" fill="#fff" stroke="#000" stroke-width="1"/></svg>
<span class="t" style="left:45px;top:5.50px;line-height:17px;font-family:'Liberation Sans',sans-serif;font-size:13px;color:#000;letter-spacing:-0.613px;"><u>F</u>ile</span>
<span class="t" style="left:76px;top:5.50px;line-height:17px;font-family:'Liberation Sans',sans-serif;font-size:13px;color:#000;letter-spacing:-0.102px;"><u>E</u>dit</span>
<span class="t" style="left:110.5px;top:5.50px;line-height:17px;font-family:'Liberation Sans',sans-serif;font-size:13px;color:#000;letter-spacing:-0.113px;"><u>V</u>iew</span>
<span class="t" style="left:150px;top:5.50px;line-height:17px;font-family:'Liberation Sans',sans-serif;font-size:13px;color:#000;letter-spacing:0.086px;"><u>N</u>avigate</span>
<span class="t" style="left:214.5px;top:5.50px;line-height:17px;font-family:'Liberation Sans',sans-serif;font-size:13px;color:#000;letter-spacing:-0.020px;"><u>C</u>ode</span>
<span class="t" style="left:258px;top:5.50px;line-height:17px;font-family:'Liberation Sans',sans-serif;font-size:13px;color:#000;letter-spacing:-0.143px;"><u>R</u>efactor</span>
<span class="t" style="left:319px;top:5.50px;line-height:17px;font-family:'Liberation Sans',sans-serif;font-size:13px;color:#000;letter-spacing:-0.284px;"><u>B</u>uild</span>
<span class="t" style="left:360px;top:5.50px;line-height:17px;font-family:'Liberation Sans',sans-serif;font-size:13px;color:#000;letter-spacing:-0.786px;">R<u>u</u>n</span>
<span class="t" style="left:394.5px;top:5.50px;line-height:17px;font-family:'Liberation Sans',sans-serif;font-size:13px;color:#000;letter-spacing:0.228px;"><u>T</u>ools</span>
<span class="t" style="left:438px;top:5.50px;line-height:17px;font-family:'Liberation Sans',sans-serif;font-size:13px;color:#000;letter-spacing:-1.245px;">VC<u>S</u></span>
<span class="t" style="left:472.5px;top:5.50px;line-height:17px;font-family:'Liberation Sans',sans-serif;font-size:13px;color:#000;letter-spacing:0.208px;"><u>W</u>indow</span>
<span class="t" style="left:532px;top:5.50px;line-height:17px;font-family:'Liberation Sans',sans-serif;font-size:13px;color:#000;letter-spacing:0.062px;"><u>H</u>elp</span>
<span class="t" style="left:590px;top:5.00px;line-height:17px;font-family:'Liberation Sans',sans-serif;font-size:13px;color:#7a7a7a;letter-spacing:-0.283px;">Bible_Game - Main.java</span>
<span class="t" style="left:12.5px;top:33.80px;line-height:17px;font-family:'Liberation Sans',sans-serif;font-size:13px;color:#000;letter-spacing:-0.455px;">Bible_Game</span>
<span class="t" style="left:96px;top:33.80px;line-height:17px;font-family:'Liberation Sans',sans-serif;font-size:13px;color:#000;letter-spacing:-0.948px;">src</span>
<span class="t" style="left:127.5px;top:33.80px;line-height:17px;font-family:'Liberation Sans',sans-serif;font-size:13px;color:#000;letter-spacing:-0.021px;">com</span>
<span class="t" style="left:168px;top:33.80px;line-height:17px;font-family:'Liberation Sans',sans-serif;font-size:13px;color:#000;letter-spacing:0.036px;">company</span>
<span class="t" style="left:253.5px;top:33.80px;line-height:17px;font-family:'Liberation Sans',sans-serif;font-size:13px;color:#000;letter-spacing:0.078px;">Main</span>
<span class="t" style="left:1586.5px;top:35.00px;line-height:17px;font-family:'Liberation Sans',sans-serif;font-size:13px;color:#000;letter-spacing:0.047px;">com.company.Main</span>
<span class="t" style="left:54px;top:63.30px;line-height:17px;font-family:'Liberation Sans',sans-serif;font-size:13px;color:#000;letter-spacing:-0.138px;">Project</span>
<span class="t" style="left:65.3px;top:85.70px;line-height:17px;font-family:'Liberation Sans',sans-serif;font-size:13px;color:#000;letter-spacing:-0.435px;-webkit-text-stroke:0.4px #000;">Bible_Game</span>
<span class="t" style="left:138.5px;top:85.70px;line-height:17px;font-family:'Liberation Sans',sans-serif;font-size:13px;color:#8c8c8c;letter-spacing:-0.259px;">C:\Users\s9208\Desktop\Bible_Game</span>
<span class="t" style="left:83px;top:105.70px;line-height:17px;font-family:'Liberation Sans',sans-serif;font-size:13px;color:#000;letter-spacing:-0.141px;">.idea</span>
<span class="t" style="left:83px;top:125.70px;line-height:17px;font-family:'Liberation Sans',sans-serif;font-size:13px;color:#000;letter-spacing:0.307px;">out</span>
<span class="t" style="left:83px;top:145.70px;line-height:17px;font-family:'Liberation Sans',sans-serif;font-size:13px;color:#000;letter-spacing:-0.948px;">src</span>
<span class="t" style="left:101.5px;top:165.70px;line-height:17px;font-family:'Liberation Sans',sans-serif;font-size:13px;color:#000;letter-spacing:-0.038px;">com.company</span>
<span class="t" style="left:119.5px;top:185.70px;line-height:17px;font-family:'Liberation Sans',sans-serif;font-size:13px;color:#000;letter-spacing:-0.355px;">GameView</span>
<span class="t" style="left:137.5px;top:205.70px;line-height:17px;font-family:'Liberation Sans',sans-serif;font-size:13px;color:#000;letter-spacing:-0.427px;">DisasterView</span>
<span class="t" style="left:137.5px;top:225.70px;line-height:17px;font-family:'Liberation Sans',sans-serif;font-size:13px;color:#000;letter-spacing:-0.355px;">GameView</span>
<span class="t" style="left:119.5px;top:245.70px;line-height:17px;font-family:'Liberation Sans',sans-serif;font-size:13px;color:#000;letter-spacing:-0.245px;">Sprite</span>
<span class="t" style="left:137.5px;top:265.70px;line-height:17px;font-family:'Liberation Sans',sans-serif;font-size:13px;color:#000;letter-spacing:0.078px;">Door</span>
<span class="t" style="left:137.5px;top:285.70px;line-height:17px;font-family:'Liberation Sans',sans-serif;font-size:13px;color:#000;letter-spacing:-0.359px;">Moses</span>
<span class="t" style="left:137.5px;top:305.70px;line-height:17px;font-family:'Liberation Sans',sans-serif;font-size:13px;color:#000;letter-spacing:-0.328px;">Sprite</span>
<span class="t" style="left:119.5px;top:325.70px;line-height:17px;font-family:'Liberation Sans',sans-serif;font-size:13px;color:#000;letter-spacing:-0.047px;">Main</span>
<span class="t" style="left:83px;top:345.70px;line-height:17px;font-family:'Liberation Sans',sans-serif;font-size:13px;color:#000;letter-spacing:-0.113px;">anubis.png</span>
<span class="t" style="left:83px;top:365.70px;line-height:17px;font-family:'Liberation Sans',sans-serif;font-size:13px;color:#000;letter-spacing:-0.340px;">Bible_Game.iml</span>
<span class="t" style="left:83px;top:385.70px;line-height:17px;font-family:'Liberation Sans',sans-serif;font-size:13px;color:#000;letter-spacing:0.214px;">bug.png</span>
<span class="t" style="left:83px;top:405.70px;line-height:17px;font-family:'Liberation Sans',sans-serif;font-size:13px;color:#000;letter-spacing:-0.022px;">cat.png</span>
<span class="t" style="left:83px;top:425.70px;line-height:17px;font-family:'Liberation Sans',sans-serif;font-size:13px;color:#000;letter-spacing:0.361px;">door.png</span>
<span class="t" style="left:83px;top:445.70px;line-height:17px;font-family:'Liberation Sans',sans-serif;font-size:13px;color:#000;letter-spacing:0.193px;">egypt.jpg</span>
<span class="t" style="left:83px;top:465.70px;line-height:17px;font-family:'Liberation Sans',sans-serif;font-size:13px;color:#000;letter-spacing:0.225px;">frog.png</span>
<span class="t" style="left:83px;top:485.70px;line-height:17px;font-family:'Liberation Sans',sans-serif;font-size:13px;color:#000;letter-spacing:-0.060px;">ice.png</span>
<span class="t" style="left:83px;top:505.70px;line-height:17px;font-family:'Liberation Sans',sans-serif;font-size:13px;color:#000;letter-spacing:-0.122px;">Moses.png</span>
<span class="t" style="left:83px;top:525.70px;line-height:17px;font-family:'Liberation Sans',sans-serif;font-size:13px;color:#000;letter-spacing:0.087px;">mountain.jpg</span>
<span class="t" style="left:83px;top:545.70px;line-height:17px;font-family:'Liberation Sans',sans-serif;font-size:13px;color:#000;letter-spacing:-0.203px;">sea.jpg</span>
<span class="t" style="left:83px;top:565.70px;line-height:17px;font-family:'Liberation Sans',sans-serif;font-size:13px;color:#000;letter-spacing:-0.068px;">stone.png</span>
<span class="t" style="left:83px;top:585.70px;line-height:17px;font-family:'Liberation Sans',sans-serif;font-size:13px;color:#000;letter-spacing:0.114px;">tombstone.png</span>
<span class="t" style="left:65.5px;top:605.70px;line-height:17px;font-family:'Liberation Sans',sans-serif;font-size:13px;color:#000;letter-spacing:-0.398px;">External Libraries</span>
<span class="t" style="left:65.5px;top:625.70px;line-height:17px;font-family:'Liberation Sans',sans-serif;font-size:13px;color:#000;letter-spacing:-0.428px;">Scratches and Consoles</span>
<span class="t" style="left:530px;top:63.30px;line-height:17px;font-family:'Liberation Sans',sans-serif;font-size:13px;color:#000;letter-spacing:-0.346px;">DisasterView.java</span>
<span class="t" style="left:677.5px;top:63.30px;line-height:17px;font-family:'Liberation Sans',sans-serif;font-size:13px;color:#000;letter-spacing:-0.276px;">GameView.java</span>
<span class="t" style="left:814px;top:63.30px;line-height:17px;font-family:'Liberation Sans',sans-serif;font-size:13px;color:#000;letter-spacing:-0.047px;">Door.java</span>
<span class="t" style="left:919.5px;top:63.30px;line-height:17px;font-family:'Liberation Sans',sans-serif;font-size:13px;color:#000;letter-spacing:-0.325px;">Moses.java</span>
<span class="t" style="left:1032px;top:63.30px;line-height:17px;font-family:'Liberation Sans',sans-serif;font-size:13px;color:#000;letter-spacing:-0.266px;">Sprite.java</span>
<span class="t" style="left:1141px;top:63.30px;line-height:17px;font-family:'Liberation Sans',sans-serif;font-size:13px;color:#000;letter-spacing:-0.071px;">Main.java</span>
<span class="t" style="left:50px;top:1001.67px;line-height:16px;font-family:'Liberation Sans',sans-serif;font-size:12.5px;color:#1a1a1a;letter-spacing:-0.298px;z-index:6;">Version Control</span>
<span class="t" style="left:169.5px;top:1001.67px;line-height:16px;font-family:'Liberation Sans',sans-serif;font-size:12.5px;color:#1a1a1a;letter-spacing:-0.646px;z-index:6;">Run</span>
<span class="t" style="left:226px;top:1001.67px;line-height:16px;font-family:'Liberation Sans',sans-serif;font-size:12.5px;color:#1a1a1a;letter-spacing:-0.973px;z-index:6;">TODO</span>
<span class="t" style="left:295.5px;top:1001.67px;line-height:16px;font-family:'Liberation Sans',sans-serif;font-size:12.5px;color:#1a1a1a;letter-spacing:-0.537px;z-index:6;">Problems</span>
<span class="t" style="left:382px;top:1001.67px;line-height:16px;font-family:'Liberation Sans',sans-serif;font-size:12.5px;color:#1a1a1a;letter-spacing:-0.281px;z-index:6;">Terminal</span>
<span class="t" style="left:464px;top:1001.67px;line-height:16px;font-family:'Liberation Sans',sans-serif;font-size:12.5px;color:#1a1a1a;letter-spacing:-0.867px;z-index:6;">Services</span>
<span class="t" style="left:542.5px;top:1001.67px;line-height:16px;font-family:'Liberation Sans',sans-serif;font-size:12.5px;color:#1a1a1a;letter-spacing:-0.359px;z-index:6;">Build</span>
<span class="t" style="left:27.3px;top:1021.87px;line-height:16px;font-family:'Liberation Sans',sans-serif;font-size:12.5px;color:#1a1a1a;letter-spacing:-0.067px;">Build completed successfully in 2 sec, 801 ms (2 minutes ago)</span>
<span class="t" style="left:1715.5px;top:1021.87px;line-height:16px;font-family:'Liberation Sans',sans-serif;font-size:12.5px;color:#1a1a1a;letter-spacing:-0.461px;">10:1</span>
<span class="t" style="left:1751px;top:1021.87px;line-height:16px;font-family:'Liberation Sans',sans-serif;font-size:12.5px;color:#1a1a1a;letter-spacing:-1.039px;">CRLF</span>
<span class="t" style="left:1791px;top:1021.87px;line-height:16px;font-family:'Liberation Sans',sans-serif;font-size:12.5px;color:#1a1a1a;letter-spacing:-0.284px;">UTF-8</span>
<span class="t" style="left:1837px;top:1021.87px;line-height:16px;font-family:'Liberation Sans',sans-serif;font-size:12.5px;color:#1a1a1a;letter-spacing:-0.254px;">4 spaces</span>
<span class="t" style="left:516.8px;top:89.87px;line-height:24px;font-family:'Liberation Mono',monospace;font-size:18.5px;color:#adadad;letter-spacing:-0.909px;">1</span>
<span class="t" style="left:516.8px;top:120.87px;line-height:24px;font-family:'Liberation Mono',monospace;font-size:18.5px;color:#adadad;letter-spacing:-0.909px;">2</span>
<span class="t" style="left:516.8px;top:151.87px;line-height:24px;font-family:'Liberation Mono',monospace;font-size:18.5px;color:#adadad;letter-spacing:-0.909px;">3</span>
<span class="t" style="left:516.8px;top:182.87px;line-height:24px;font-family:'Liberation Mono',monospace;font-size:18.5px;color:#adadad;letter-spacing:-0.909px;">4</span>
<span class="t" style="left:516.8px;top:213.87px;line-height:24px;font-family:'Liberation Mono',monospace;font-size:18.5px;color:#adadad;letter-spacing:-0.909px;">5</span>
<span class="t" style="left:516.8px;top:244.87px;line-height:24px;font-family:'Liberation Mono',monospace;font-size:18.5px;color:#adadad;letter-spacing:-0.909px;">6</span>
<span class="t" style="left:516.8px;top:275.87px;line-height:24px;font-family:'Liberation Mono',monospace;font-size:18.5px;color:#adadad;letter-spacing:-0.909px;">7</span>
<span class="t" style="left:516.8px;top:306.87px;line-height:24px;font-family:'Liberation Mono',monospace;font-size:18.5px;color:#adadad;letter-spacing:-0.909px;">8</span>
<span class="t" style="left:516.8px;top:337.87px;line-height:24px;font-family:'Liberation Mono',monospace;font-size:18.5px;color:#adadad;letter-spacing:-0.909px;">9</span>
<span class="t" style="left:506.6px;top:368.87px;line-height:24px;font-family:'Liberation Mono',monospace;font-size:18.5px;color:#adadad;letter-spacing:-0.909px;">10</span>
<span class="t" style="left:506.6px;top:399.87px;line-height:24px;font-family:'Liberation Mono',monospace;font-size:18.5px;color:#adadad;letter-spacing:-0.909px;">11</span>
<span class="t" style="left:506.6px;top:430.87px;line-height:24px;font-family:'Liberation Mono',monospace;font-size:18.5px;color:#adadad;letter-spacing:-0.909px;">12</span>
<span class="t" style="left:506.6px;top:461.87px;line-height:24px;font-family:'Liberation Mono',monospace;font-size:18.5px;color:#adadad;letter-spacing:-0.909px;">13</span>
<span class="t" style="left:506.6px;top:492.87px;line-height:24px;font-family:'Liberation Mono',monospace;font-size:18.5px;color:#adadad;letter-spacing:-0.909px;">14</span>
<span class="t" style="left:506.6px;top:523.87px;line-height:24px;font-family:'Liberation Mono',monospace;font-size:18.5px;color:#adadad;letter-spacing:-0.909px;">15</span>
<span class="t" style="left:506.6px;top:554.87px;line-height:24px;font-family:'Liberation Mono',monospace;font-size:18.5px;color:#adadad;letter-spacing:-0.909px;">16</span>
<span class="t" style="left:506.6px;top:585.87px;line-height:24px;font-family:'Liberation Mono',monospace;font-size:18.5px;color:#adadad;letter-spacing:-0.909px;">17</span>
<span class="t" style="left:506.6px;top:616.87px;line-height:24px;font-family:'Liberation Mono',monospace;font-size:18.5px;color:#adadad;letter-spacing:-0.909px;">18</span>
<span class="t" style="left:506.6px;top:647.87px;line-height:24px;font-family:'Liberation Mono',monospace;font-size:18.5px;color:#adadad;letter-spacing:-0.909px;">19</span>
<span class="t" style="left:506.6px;top:678.87px;line-height:24px;font-family:'Liberation Mono',monospace;font-size:18.5px;color:#adadad;letter-spacing:-0.909px;">20</span>
<span class="t" style="left:506.6px;top:709.87px;line-height:24px;font-family:'Liberation Mono',monospace;font-size:18.5px;color:#adadad;letter-spacing:-0.909px;">21</span>
<span class="t" style="left:506.6px;top:740.87px;line-height:24px;font-family:'Liberation Mono',monospace;font-size:18.5px;color:#adadad;letter-spacing:-0.909px;">22</span>
<span class="t" style="left:506.6px;top:771.87px;line-height:24px;font-family:'Liberation Mono',monospace;font-size:18.5px;color:#adadad;letter-spacing:-0.909px;">23</span>
<span class="t" style="left:506.6px;top:802.87px;line-height:24px;font-family:'Liberation Mono',monospace;font-size:18.5px;color:#adadad;letter-spacing:-0.909px;">24</span>
<span class="t" style="left:506.6px;top:833.87px;line-height:24px;font-family:'Liberation Mono',monospace;font-size:18.5px;color:#adadad;letter-spacing:-0.909px;">25</span>
<span class="t" style="left:506.6px;top:864.87px;line-height:24px;font-family:'Liberation Mono',monospace;font-size:18.5px;color:#adadad;letter-spacing:-0.909px;">26</span>
<span class="t" style="left:506.6px;top:895.87px;line-height:24px;font-family:'Liberation Mono',monospace;font-size:18.5px;color:#adadad;letter-spacing:-0.909px;">27</span>
<span class="t" style="left:506.6px;top:926.87px;line-height:24px;font-family:'Liberation Mono',monospace;font-size:18.5px;color:#adadad;letter-spacing:-0.909px;">30</span>
<span class="t" style="left:506.6px;top:957.87px;line-height:24px;font-family:'Liberation Mono',monospace;font-size:18.5px;color:#adadad;letter-spacing:-0.909px;">31</span>
<span class="t" style="left:506.6px;top:988.87px;line-height:24px;font-family:'Liberation Mono',monospace;font-size:18.5px;color:#adadad;letter-spacing:-0.909px;">32</span>
<span class="t" style="left:584.0px;top:89.14px;line-height:25px;font-family:'Liberation Mono',monospace;font-size:19px;color:#1c38a4;letter-spacing:-0.404px;">package</span>
<span class="t" style="left:672.0px;top:89.14px;line-height:25px;font-family:'Liberation Mono',monospace;font-size:19px;color:#0c0c0c;letter-spacing:-0.402px;">com.company;</span>
<span class="t" style="left:584.0px;top:120.14px;line-height:25px;font-family:'Liberation Mono',monospace;font-size:19px;color:#1c38a4;letter-spacing:-0.404px;">import</span>
<span class="t" style="left:661.0px;top:120.14px;line-height:25px;font-family:'Liberation Mono',monospace;font-size:19px;color:#0c0c0c;letter-spacing:-0.402px;">com.company.GameView.DisasterView;</span>
<span class="t" style="left:584.0px;top:151.14px;line-height:25px;font-family:'Liberation Mono',monospace;font-size:19px;color:#1c38a4;letter-spacing:-0.404px;">import</span>
<span class="t" style="left:661.0px;top:151.14px;line-height:25px;font-family:'Liberation Mono',monospace;font-size:19px;color:#0c0c0c;letter-spacing:-0.402px;">com.company.GameView.GameView;</span>
<span class="t" style="left:584.0px;top:182.14px;line-height:25px;font-family:'Liberation Mono',monospace;font-size:19px;color:#1c38a4;letter-spacing:-0.404px;">import</span>
<span class="t" style="left:661.0px;top:182.14px;line-height:25px;font-family:'Liberation Mono',monospace;font-size:19px;color:#0c0c0c;letter-spacing:-0.402px;">com.company.Sprite.Moses;</span>
<span class="t" style="left:584.0px;top:244.14px;line-height:25px;font-family:'Liberation Mono',monospace;font-size:19px;color:#1c38a4;letter-spacing:-0.404px;">import</span>
<span class="t" style="left:661.0px;top:244.14px;line-height:25px;font-family:'Liberation Mono',monospace;font-size:19px;color:#0c0c0c;letter-spacing:-0.403px;">javax.swing.<span style="display:inline-block;width:10.6px;text-indent:-1.7px;font-size:24px;line-height:0;position:relative;top:6.5px;letter-spacing:0">*</span>;</span>
<span class="t" style="left:584.0px;top:275.14px;line-height:25px;font-family:'Liberation Mono',monospace;font-size:19px;color:#1c38a4;letter-spacing:-0.404px;">import</span>
<span class="t" style="left:661.0px;top:275.14px;line-height:25px;font-family:'Liberation Mono',monospace;font-size:19px;color:#0c0c0c;letter-spacing:-0.402px;">java.awt.<span style="display:inline-block;width:10.6px;text-indent:-1.7px;font-size:24px;line-height:0;position:relative;top:6.5px;letter-spacing:0">*</span>;</span>
<span class="t" style="left:584.0px;top:337.14px;line-height:25px;font-family:'Liberation Mono',monospace;font-size:19px;color:#1c38a4;letter-spacing:-0.402px;">public class</span>
<span class="t" style="left:727.0px;top:337.14px;line-height:25px;font-family:'Liberation Mono',monospace;font-size:19px;color:#0c0c0c;letter-spacing:-0.402px;">Main</span>
<span class="t" style="left:782.0px;top:337.14px;line-height:25px;font-family:'Liberation Mono',monospace;font-size:19px;color:#1c38a4;letter-spacing:-0.404px;">extends</span>
<span class="t" style="left:870.0px;top:337.14px;line-height:25px;font-family:'Liberation Mono',monospace;font-size:19px;color:#0c0c0c;letter-spacing:-0.402px;">JPanel {</span>
<span class="t" style="left:628.0px;top:399.14px;line-height:25px;font-family:'Liberation Mono',monospace;font-size:19px;color:#1c38a4;letter-spacing:-0.402px;">public static final int</span>
<span class="t" style="left:892.0px;top:399.14px;line-height:25px;font-family:'Liberation Mono',monospace;font-size:19px;font-style:italic;color:#871094;letter-spacing:-0.402px;">CELL</span>
<span class="t" style="left:947.0px;top:399.14px;line-height:25px;font-family:'Liberation Mono',monospace;font-size:19px;color:#0c0c0c;letter-spacing:-0.406px;">=</span>
<span class="t" style="left:969.0px;top:399.14px;line-height:25px;font-family:'Liberation Mono',monospace;font-size:19px;color:#2050dc;letter-spacing:-0.406px;">50</span>
<span class="t" style="left:991.0px;top:399.14px;line-height:25px;font-family:'Liberation Mono',monospace;font-size:19px;color:#0c0c0c;letter-spacing:-0.406px;">;</span>
<span class="t" style="left:628.0px;top:430.14px;line-height:25px;font-family:'Liberation Mono',monospace;font-size:19px;color:#1c38a4;letter-spacing:-0.402px;">public static final int</span>
<span class="t" style="left:892.0px;top:430.14px;line-height:25px;font-family:'Liberation Mono',monospace;font-size:19px;font-style:italic;color:#871094;letter-spacing:-0.403px;">WIDTH</span>
<span class="t" style="left:958.0px;top:430.14px;line-height:25px;font-family:'Liberation Mono',monospace;font-size:19px;color:#0c0c0c;letter-spacing:-0.406px;">=</span>
<span class="t" style="left:980.0px;top:430.14px;line-height:25px;font-family:'Liberation Mono',monospace;font-size:19px;color:#2050dc;letter-spacing:-0.406px;">500</span>
<span class="t" style="left:1013.0px;top:430.14px;line-height:25px;font-family:'Liberation Mono',monospace;font-size:19px;color:#0c0c0c;letter-spacing:-0.406px;">;</span>
<span class="t" style="left:628.0px;top:461.14px;line-height:25px;font-family:'Liberation Mono',monospace;font-size:19px;color:#1c38a4;letter-spacing:-0.402px;">public static final int</span>
<span class="t" style="left:892.0px;top:461.14px;line-height:25px;font-family:'Liberation Mono',monospace;font-size:19px;font-style:italic;color:#871094;letter-spacing:-0.404px;">HEIGHT</span>
<span class="t" style="left:969.0px;top:461.14px;line-height:25px;font-family:'Liberation Mono',monospace;font-size:19px;color:#0c0c0c;letter-spacing:-0.406px;">=</span>
<span class="t" style="left:991.0px;top:461.14px;line-height:25px;font-family:'Liberation Mono',monospace;font-size:19px;color:#2050dc;letter-spacing:-0.406px;">500</span>
<span class="t" style="left:1024.0px;top:461.14px;line-height:25px;font-family:'Liberation Mono',monospace;font-size:19px;color:#0c0c0c;letter-spacing:-0.406px;">;</span>
<span class="t" style="left:628.0px;top:492.14px;line-height:25px;font-family:'Liberation Mono',monospace;font-size:19px;color:#1c38a4;letter-spacing:-0.402px;">public static final int</span>
<span class="t" style="left:892.0px;top:492.14px;line-height:25px;font-family:'Liberation Mono',monospace;font-size:19px;font-style:italic;color:#808080;letter-spacing:-0.406px;">ROW</span>
<span class="t" style="left:936.0px;top:492.14px;line-height:25px;font-family:'Liberation Mono',monospace;font-size:19px;color:#0c0c0c;letter-spacing:-0.406px;">=</span>
<span class="t" style="left:958.0px;top:492.14px;line-height:25px;font-family:'Liberation Mono',monospace;font-size:19px;font-style:italic;color:#871094;letter-spacing:-0.404px;">HEIGHT</span>
<span class="t" style="left:1035.0px;top:492.14px;line-height:25px;font-family:'Liberation Mono',monospace;font-size:19px;color:#0c0c0c;letter-spacing:-0.406px;">/</span>
<span class="t" style="left:1057.0px;top:492.14px;line-height:25px;font-family:'Liberation Mono',monospace;font-size:19px;font-style:italic;color:#871094;letter-spacing:-0.402px;">CELL</span>
<span class="t" style="left:1101.0px;top:492.14px;line-height:25px;font-family:'Liberation Mono',monospace;font-size:19px;color:#0c0c0c;letter-spacing:-0.406px;">;</span>
<span class="t" style="left:628.0px;top:523.14px;line-height:25px;font-family:'Liberation Mono',monospace;font-size:19px;color:#1c38a4;letter-spacing:-0.402px;">public static final int</span>
<span class="t" style="left:892.0px;top:523.14px;line-height:25px;font-family:'Liberation Mono',monospace;font-size:19px;font-style:italic;color:#808080;letter-spacing:-0.404px;">COLUMN</span>
<span class="t" style="left:969.0px;top:523.14px;line-height:25px;font-family:'Liberation Mono',monospace;font-size:19px;color:#0c0c0c;letter-spacing:-0.406px;">=</span>
<span class="t" style="left:991.0px;top:523.14px;line-height:25px;font-family:'Liberation Mono',monospace;font-size:19px;font-style:italic;color:#871094;letter-spacing:-0.403px;">WIDTH</span>
<span class="t" style="left:1057.0px;top:523.14px;line-height:25px;font-family:'Liberation Mono',monospace;font-size:19px;color:#0c0c0c;letter-spacing:-0.406px;">/</span>
<span class="t" style="left:1079.0px;top:523.14px;line-height:25px;font-family:'Liberation Mono',monospace;font-size:19px;font-style:italic;color:#871094;letter-spacing:-0.402px;">CELL</span>
<span class="t" style="left:1123.0px;top:523.14px;line-height:25px;font-family:'Liberation Mono',monospace;font-size:19px;color:#0c0c0c;letter-spacing:-0.406px;">;</span>
<span class="t" style="left:628.0px;top:585.14px;line-height:25px;font-family:'Liberation Mono',monospace;font-size:19px;color:#0c0c0c;letter-spacing:-0.403px;">Moses</span>
<span class="t" style="left:694.0px;top:585.14px;line-height:25px;font-family:'Liberation Mono',monospace;font-size:19px;color:#871094;letter-spacing:-0.403px;">moses</span>
<span class="t" style="left:749.0px;top:585.14px;line-height:25px;font-family:'Liberation Mono',monospace;font-size:19px;color:#0c0c0c;letter-spacing:-0.406px;">;</span>
<span class="t" style="left:628.0px;top:616.14px;line-height:25px;font-family:'Liberation Mono',monospace;font-size:19px;color:#1c38a4;letter-spacing:-0.403px;">public static</span>
<span class="t" style="left:782.0px;top:616.14px;line-height:25px;font-family:'Liberation Mono',monospace;font-size:19px;color:#0c0c0c;letter-spacing:-0.402px;">GameView</span>
<span class="t" style="left:881.0px;top:616.14px;line-height:25px;font-family:'Liberation Mono',monospace;font-size:19px;font-style:italic;color:#871094;letter-spacing:-0.402px;">gameView</span>
<span class="t" style="left:969.0px;top:616.14px;line-height:25px;font-family:'Liberation Mono',monospace;font-size:19px;color:#0c0c0c;letter-spacing:-0.406px;">;</span>
<span class="t" style="left:628.0px;top:678.14px;line-height:25px;font-family:'Liberation Mono',monospace;font-size:19px;color:#1c38a4;letter-spacing:-0.404px;">public</span>
<span class="t" style="left:705.0px;top:678.14px;line-height:25px;font-family:'Liberation Mono',monospace;font-size:19px;color:#00627a;letter-spacing:-0.402px;">Main</span>
<span class="t" style="left:749.0px;top:678.14px;line-height:25px;font-family:'Liberation Mono',monospace;font-size:19px;color:#0c0c0c;letter-spacing:-0.402px;">() {</span>
<span class="t" style="left:672.0px;top:709.14px;line-height:25px;font-family:'Liberation Mono',monospace;font-size:19px;color:#871094;letter-spacing:-0.403px;">moses</span>
<span class="t" style="left:738.0px;top:709.14px;line-height:25px;font-family:'Liberation Mono',monospace;font-size:19px;color:#0c0c0c;letter-spacing:-0.406px;">=</span>
<span class="t" style="left:760.0px;top:709.14px;line-height:25px;font-family:'Liberation Mono',monospace;font-size:19px;color:#1c38a4;letter-spacing:-0.406px;">new</span>
<span class="t" style="left:804.0px;top:709.14px;line-height:25px;font-family:'Liberation Mono',monospace;font-size:19px;color:#0c0c0c;letter-spacing:-0.404px;">Moses(</span>
<span class="t" style="left:672.0px;top:740.14px;line-height:25px;font-family:'Liberation Mono',monospace;font-size:19px;font-style:italic;color:#871094;letter-spacing:-0.402px;">gameView</span>
<span class="t" style="left:771.0px;top:740.14px;line-height:25px;font-family:'Liberation Mono',monospace;font-size:19px;color:#0c0c0c;letter-spacing:-0.406px;">=</span>
<span class="t" style="left:793.0px;top:740.14px;line-height:25px;font-family:'Liberation Mono',monospace;font-size:19px;color:#1c38a4;letter-spacing:-0.406px;">new</span>
<span class="t" style="left:837.0px;top:740.14px;line-height:25px;font-family:'Liberation Mono',monospace;font-size:19px;color:#0c0c0c;letter-spacing:-0.402px;">DisasterView();</span>
<span class="t" style="left:628.0px;top:771.14px;line-height:25px;font-family:'Liberation Mono',monospace;font-size:19px;color:#0c0c0c;letter-spacing:-0.406px;">}</span>
<span class="t" style="left:628.0px;top:864.14px;line-height:25px;font-family:'Liberation Mono',monospace;font-size:19px;color:#9e880d;letter-spacing:-0.403px;">@Override</span>
<span class="t" style="left:628.0px;top:895.14px;line-height:25px;font-family:'Liberation Mono',monospace;font-size:19px;color:#1c38a4;letter-spacing:-0.404px;">public</span>
<span class="t" style="left:705.0px;top:895.14px;line-height:25px;font-family:'Liberation Mono',monospace;font-size:19px;color:#0c0c0c;letter-spacing:-0.403px;">Dimension</span>
<span class="t" style="left:815.0px;top:895.14px;line-height:25px;font-family:'Liberation Mono',monospace;font-size:19px;color:#00627a;letter-spacing:-0.402px;">getPreferredSize</span>
<span class="t" style="left:991.0px;top:895.14px;line-height:25px;font-family:'Liberation Mono',monospace;font-size:19px;color:#0c0c0c;letter-spacing:-0.406px;">()</span>
<span class="t" style="left:628.0px;top:957.14px;line-height:25px;font-family:'Liberation Mono',monospace;font-size:19px;color:#9e880d;letter-spacing:-0.403px;">@Override</span>
<span class="t" style="left:628.0px;top:988.14px;line-height:25px;font-family:'Liberation Mono',monospace;font-size:19px;color:#1c38a4;letter-spacing:-0.402px;">public void</span>
<span class="t" style="left:760.0px;top:988.14px;line-height:25px;font-family:'Liberation Mono',monospace;font-size:19px;color:#00627a;letter-spacing:-0.403px;">paintComponent</span>
<span class="t" style="left:914.0px;top:988.14px;line-height:25px;font-family:'Liberation Mono',monospace;font-size:19px;color:#0c0c0c;letter-spacing:-0.403px;">(Graphics g) {</span>
<span class="t" style="left:877px;top:711.00px;line-height:20px;font-family:'Liberation Sans',sans-serif;font-size:15px;color:#858585;letter-spacing:0.164px;">x:</span>
<span class="t" style="left:896px;top:709.14px;line-height:25px;font-family:'Liberation Mono',monospace;font-size:19px;color:#2050dc;letter-spacing:-0.406px;">1<span style="color:#080808">,</span></span>
<span class="t" style="left:936px;top:711.00px;line-height:20px;font-family:'Liberation Sans',sans-serif;font-size:15px;color:#858585;letter-spacing:0.164px;">y:</span>
<span class="t" style="left:955px;top:709.14px;line-height:25px;font-family:'Liberation Mono',monospace;font-size:19px;color:#2050dc;letter-spacing:-0.406px;">1<span style="color:#080808">);</span></span>
<span class="t" style="left:1024px;top:895.14px;line-height:25px;font-family:'Liberation Mono',monospace;font-size:19px;color:#4f5f52;letter-spacing:-0.406px;">{</span>
<span class="t" style="left:1046.0px;top:895.14px;line-height:25px;font-family:'Liberation Mono',monospace;font-size:19px;color:#1c38a4;letter-spacing:-0.403px;">return new</span>
<span class="t" style="left:1167.0px;top:895.14px;line-height:25px;font-family:'Liberation Mono',monospace;font-size:19px;color:#0c0c0c;letter-spacing:-0.403px;">Dimension(</span>
<span class="t" style="left:1277.0px;top:895.14px;line-height:25px;font-family:'Liberation Mono',monospace;font-size:19px;font-style:italic;color:#871094;letter-spacing:-0.403px;">WIDTH</span>
<span class="t" style="left:1332.0px;top:895.14px;line-height:25px;font-family:'Liberation Mono',monospace;font-size:19px;color:#0c0c0c;letter-spacing:-0.406px;">,</span>
<span class="t" style="left:1354.0px;top:895.14px;line-height:25px;font-family:'Liberation Mono',monospace;font-size:19px;font-style:italic;color:#871094;letter-spacing:-0.404px;">HEIGHT</span>
<span class="t" style="left:1420.0px;top:895.14px;line-height:25px;font-family:'Liberation Mono',monospace;font-size:19px;color:#0c0c0c;letter-spacing:-0.406px;">);</span>
<span class="t" style="left:1452px;top:895.14px;line-height:25px;font-family:'Liberation Mono',monospace;font-size:19px;color:#4f5f52;letter-spacing:-0.406px;">}</span>
<span class="t" style="left:1844.5px;top:90.67px;line-height:16px;font-family:'Liberation Sans',sans-serif;font-size:12.5px;color:#5a5a5a;letter-spacing:-0.453px;">2</span>
<span class="t" style="left:1745.5px;top:1050.52px;line-height:18px;font-family:'Liberation Sans',sans-serif;font-size:13.5px;color:#3ed13e;letter-spacing:-0.016px;">70</span>
</body></html>
